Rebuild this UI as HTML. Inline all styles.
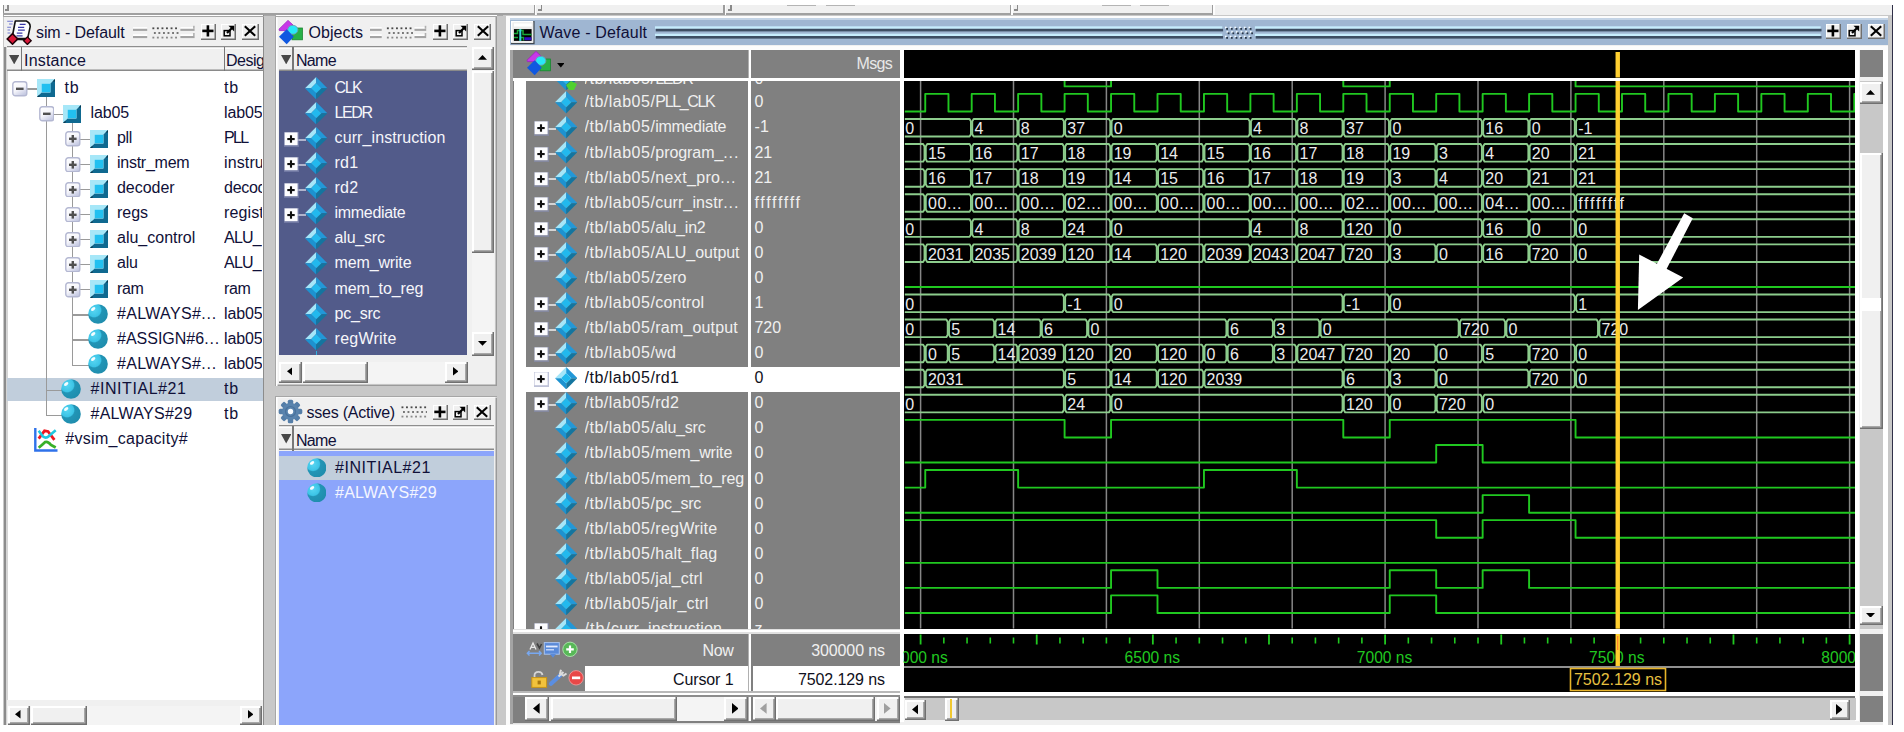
<!DOCTYPE html>
<html><head><meta charset="utf-8"><title>ModelSim Wave</title>
<style>
html,body{margin:0;padding:0;background:#fff;}
body{width:1904px;height:732px;position:relative;overflow:hidden;font-family:"Liberation Sans", sans-serif;font-size:16px;}
body div, body svg{position:absolute;box-sizing:border-box;}
.t{white-space:pre;}
#root{left:0;top:0;width:1904px;height:732px;overflow:hidden;}
</style></head><body>
<div id="root">
<div style="left:3.2px;top:5.0px;width:1888.5px;height:11.0px;background:#f0f0f0;"></div>
<div style="left:3.2px;top:5.0px;width:1.0px;height:9.0px;background:#909090;"></div>
<div style="left:3.2px;top:13.0px;width:531.5px;height:1.7px;background:#a0a0a0;"></div>
<div style="left:533.5px;top:5.0px;width:1.4px;height:9.5px;background:#9c9c9c;"></div>
<div style="left:534.9px;top:5.0px;width:1.6px;height:9.5px;background:#fdfdfd;"></div>
<div style="left:7.4px;top:5.0px;width:1.4px;height:5.5px;background:#8a8a8a;"></div>
<div style="left:4.8px;top:9.2px;width:4.0px;height:1.4px;background:#8a8a8a;"></div>
<div style="left:536.5px;top:13.0px;width:187.9px;height:1.7px;background:#a0a0a0;"></div>
<div style="left:723.2px;top:5.0px;width:1.4px;height:9.5px;background:#9c9c9c;"></div>
<div style="left:724.6px;top:5.0px;width:1.6px;height:9.5px;background:#fdfdfd;"></div>
<div style="left:540.7px;top:5.0px;width:1.4px;height:5.5px;background:#8a8a8a;"></div>
<div style="left:538.1px;top:9.2px;width:4.0px;height:1.4px;background:#8a8a8a;"></div>
<div style="left:726.2px;top:13.0px;width:284.8px;height:1.7px;background:#a0a0a0;"></div>
<div style="left:1009.8px;top:5.0px;width:1.4px;height:9.5px;background:#9c9c9c;"></div>
<div style="left:1011.2px;top:5.0px;width:1.6px;height:9.5px;background:#fdfdfd;"></div>
<div style="left:730.4px;top:5.0px;width:1.4px;height:5.5px;background:#8a8a8a;"></div>
<div style="left:727.8px;top:9.2px;width:4.0px;height:1.4px;background:#8a8a8a;"></div>
<div style="left:1012.8px;top:13.0px;width:200.2px;height:1.7px;background:#a0a0a0;"></div>
<div style="left:1211.8px;top:5.0px;width:1.4px;height:9.5px;background:#9c9c9c;"></div>
<div style="left:1213.2px;top:5.0px;width:1.6px;height:9.5px;background:#fdfdfd;"></div>
<div style="left:1017.0px;top:5.0px;width:1.4px;height:5.5px;background:#8a8a8a;"></div>
<div style="left:1014.4px;top:9.2px;width:4.0px;height:1.4px;background:#8a8a8a;"></div>
<div style="left:786.8px;top:5.0px;width:29.2px;height:1.0px;background:#b4b4b4;"></div>
<div style="left:825.6px;top:5.0px;width:29.4px;height:1.0px;background:#b4b4b4;"></div>
<div style="left:1101.7px;top:5.0px;width:29.3px;height:1.0px;background:#b4b4b4;"></div>
<div style="left:1139.5px;top:5.0px;width:29.5px;height:1.0px;background:#b4b4b4;"></div>
<div style="left:3.2px;top:15.0px;width:1889.0px;height:709.5px;background:#c8c8c8;"></div>
<div style="left:3.2px;top:14.7px;width:500.0px;height:1.3px;background:#a8a8a8;"></div>
<div style="left:3.5px;top:15.0px;width:260.0px;height:709.5px;background:#fff;box-shadow:inset 2px 0 0 #8c8c8c, inset 4px 0 0 #d4d4d4;"></div>
<div style="left:3.5px;top:15.0px;width:260.0px;height:31.5px;background:#f0f0f0;box-shadow:inset 0 1.5px 0 #fff;"></div>
<div style="left:262.5px;top:15.0px;width:1.5px;height:709.5px;background:#8c8c8c;"></div>
<div style="left:3.2px;top:15.6px;width:261.0px;height:1.5px;background:#a6a6a6;"></div>
<svg style="left:6.0px;top:19.0px;" width="27.0" height="26.0" viewBox="0 0 27.0 26.0"><g transform="translate(-6,-19)"><path d="M7.2 21.2 H13 M9 24 H12.5 M7.2 27.2 H11 M7.5 30 H10 M7.5 33 H10.5" stroke="#7078d0" stroke-width="1.1"/><path d="M15.3 21 L26.3 21 Q30.2 22.8 30.2 26.7 L27.6 38.6 L12.4 38.6 L13 33 Z" fill="#fcfeff" stroke="#111" stroke-width="1.6" stroke-linejoin="round"/><path d="M19.7 24.3 H25.6 M18 27.3 H24.2 M18 30.2 H24.8 M16.8 33.2 H22.4 M16.5 35.9 H22.6" stroke="#3838a8" stroke-width="1.3"/><path d="M12.5 39 L27.4 39.6" stroke="#111" stroke-width="2"/><polygon points="12.5,33.6 17.8,38.9 12.5,44.2 7.2,38.9" fill="#d81838" stroke="#200008" stroke-width="1.5"/><polygon points="27.4,36.9 31.2,40.7 27.4,44.5 23.6,40.7" fill="#d81838" stroke="#200008" stroke-width="1.3"/></g></svg>
<div class="t" style="top:23.0px;height:20px;line-height:20px;font-size:16px;color:#101038;left:36.0px;"><span style="letter-spacing:-0.09px">sim - Default</span></div>
<svg style="left:133.1px;top:23.2px;" width="61.7" height="20.0" viewBox="0 0 61.7 20.0"><rect x="0.0" y="4.1" width="14.2" height="1.7" fill="#ffffff"/><rect x="0.0" y="5.8" width="14.2" height="2.1" fill="#a4a4a4"/><rect x="47.4" y="4.1" width="14.2" height="1.7" fill="#ffffff"/><rect x="47.4" y="5.8" width="14.2" height="2.1" fill="#a4a4a4"/><rect x="0.0" y="11.3" width="14.2" height="1.7" fill="#ffffff"/><rect x="0.0" y="13.0" width="14.2" height="2.1" fill="#a4a4a4"/><rect x="47.4" y="11.3" width="14.2" height="1.7" fill="#ffffff"/><rect x="47.4" y="13.0" width="14.2" height="2.1" fill="#a4a4a4"/><rect x="60.1" y="2.8" width="1.6" height="3" fill="#b0b0b0"/><rect x="60.1" y="10.0" width="1.6" height="3" fill="#b0b0b0"/><rect x="19.4" y="4.4" width="1.9" height="1.8" fill="#4a4a4a"/><rect x="23.9" y="4.4" width="1.9" height="1.8" fill="#4a4a4a"/><rect x="28.5" y="4.4" width="1.9" height="1.8" fill="#4a4a4a"/><rect x="33.0" y="4.4" width="1.9" height="1.8" fill="#4a4a4a"/><rect x="37.6" y="4.4" width="1.9" height="1.8" fill="#4a4a4a"/><rect x="42.1" y="4.4" width="1.9" height="1.8" fill="#4a4a4a"/><rect x="20.9" y="9.1" width="1.9" height="1.8" fill="#6a6a6a"/><rect x="25.4" y="9.1" width="1.9" height="1.8" fill="#6a6a6a"/><rect x="30.0" y="9.1" width="1.9" height="1.8" fill="#6a6a6a"/><rect x="34.5" y="9.1" width="1.9" height="1.8" fill="#6a6a6a"/><rect x="39.1" y="9.1" width="1.9" height="1.8" fill="#6a6a6a"/><rect x="43.6" y="9.1" width="1.9" height="1.8" fill="#6a6a6a"/><rect x="19.4" y="13.7" width="1.9" height="1.8" fill="#8a8a8a"/><rect x="23.9" y="13.7" width="1.9" height="1.8" fill="#8a8a8a"/><rect x="28.5" y="13.7" width="1.9" height="1.8" fill="#8a8a8a"/><rect x="33.0" y="13.7" width="1.9" height="1.8" fill="#8a8a8a"/><rect x="37.6" y="13.7" width="1.9" height="1.8" fill="#8a8a8a"/><rect x="42.1" y="13.7" width="1.9" height="1.8" fill="#8a8a8a"/></svg>
<div style="left:200.7px;top:23.8px;width:15.0px;height:15.8px;background:#f0f0f0;box-shadow:inset -1.5px -1.5px 0 #707070, inset 1px 1px 0 #fff;"></div>
<svg style="left:202.0px;top:25.2px;" width="12.0" height="12.0" viewBox="0 0 12.0 12.0"><rect x="0.3" y="4.6" width="11.2" height="2.6" fill="#000"/><rect x="4.6" y="0.3" width="2.6" height="11.2" fill="#000"/></svg>
<div style="left:221.4px;top:23.8px;width:15.0px;height:15.8px;background:#f0f0f0;box-shadow:inset -1.5px -1.5px 0 #707070, inset 1px 1px 0 #fff;"></div>
<svg style="left:222.7px;top:25.2px;" width="12.0" height="12.0" viewBox="0 0 12.0 12.0"><rect x="1.2" y="5.6" width="5.8" height="5.2" fill="none" stroke="#000" stroke-width="1.5"/><path d="M4 8 L10 2" stroke="#000" stroke-width="2.2" fill="none"/><polygon points="5.5,0.8 11.2,0.8 11.2,6.5" fill="#000"/></svg>
<div style="left:242.0px;top:23.8px;width:17.2px;height:15.8px;background:#f0f0f0;box-shadow:inset -1.5px -1.5px 0 #707070, inset 1px 1px 0 #fff;"></div>
<svg style="left:244.2px;top:25.4px;" width="12.0" height="12.0" viewBox="0 0 12.0 12.0"><path d="M0.8 1.2 L11.2 10.8 M11.2 1.2 L0.8 10.8" stroke="#000" stroke-width="2.1" fill="none"/></svg>
<div style="left:7.0px;top:45.7px;width:255.5px;height:25.3px;background:#f0f0f0;box-shadow:inset 0 -1.6px 0 #8a8a8a, inset 0 1.3px 0 #8e8e8e, inset 0 2.8px 0 #fff;"></div>
<svg style="left:9.1px;top:54.9px;" width="10.4" height="9.4" viewBox="0 0 10.4 9.4"><polygon points="0,0 10.4,0 5.2,9.4" fill="#484848"/></svg>
<div style="left:20.5px;top:46.5px;width:1.7px;height:24.5px;background:#787878;"></div>
<div class="t" style="top:51.0px;height:20px;line-height:20px;font-size:16px;color:#101038;left:24.0px;"><span style="letter-spacing:0.19px">Instance</span></div>
<div style="left:223.5px;top:46.5px;width:1.7px;height:24.5px;background:#787878;"></div>
<div class="t" style="top:51.0px;height:20px;line-height:20px;font-size:16px;color:#101038;left:226.0px;width:36.5px;overflow:hidden;"><span style="letter-spacing:-0.50px">Desig</span></div>
<div style="left:7.0px;top:378.3px;width:255.5px;height:22.6px;background:#c1cedc;"></div>
<div style="left:46.0px;top:97.4px;width:1.3px;height:317.3px;background:#9a9a9a;"></div>
<div style="left:27.0px;top:88.4px;width:11.0px;height:1.3px;background:#9a9a9a;"></div>
<div style="left:71.5px;top:122.5px;width:1.3px;height:242.0px;background:#9a9a9a;"></div>
<div style="left:46.0px;top:113.5px;width:7.0px;height:1.3px;background:#9a9a9a;"></div>
<div style="left:52.0px;top:113.5px;width:11.0px;height:1.3px;background:#9a9a9a;"></div>
<div style="left:71.5px;top:138.6px;width:18.0px;height:1.3px;background:#9a9a9a;"></div>
<div style="left:71.5px;top:163.7px;width:18.0px;height:1.3px;background:#9a9a9a;"></div>
<div style="left:71.5px;top:188.8px;width:18.0px;height:1.3px;background:#9a9a9a;"></div>
<div style="left:71.5px;top:213.9px;width:18.0px;height:1.3px;background:#9a9a9a;"></div>
<div style="left:71.5px;top:239.0px;width:18.0px;height:1.3px;background:#9a9a9a;"></div>
<div style="left:71.5px;top:264.1px;width:18.0px;height:1.3px;background:#9a9a9a;"></div>
<div style="left:71.5px;top:289.2px;width:18.0px;height:1.3px;background:#9a9a9a;"></div>
<div style="left:71.5px;top:314.3px;width:17.0px;height:1.3px;background:#9a9a9a;"></div>
<div style="left:71.5px;top:339.4px;width:17.0px;height:1.3px;background:#9a9a9a;"></div>
<div style="left:71.5px;top:364.5px;width:17.0px;height:1.3px;background:#9a9a9a;"></div>
<div style="left:46.0px;top:389.6px;width:16.0px;height:1.3px;background:#9a9a9a;"></div>
<div style="left:46.0px;top:414.7px;width:16.0px;height:1.3px;background:#9a9a9a;"></div>
<svg style="left:12.2px;top:81.2px;" width="15.6" height="15.6" viewBox="0 0 15.6 15.6"><defs><linearGradient id="eg1" x1="0" y1="0" x2="0.6" y2="1"><stop offset="0" stop-color="#ffffff"/><stop offset="0.55" stop-color="#f6f6fb"/><stop offset="1" stop-color="#c8cce4"/></linearGradient></defs><rect x="0.8" y="0.8" width="14.0" height="14.0" rx="2.6" fill="url(#eg1)" stroke="#b4b8d2" stroke-width="1.4"/><rect x="4.0" y="6.6" width="7.6" height="2.4" fill="#505050"/></svg>
<svg style="left:36.8px;top:79.4px;" width="18.0" height="18.0" viewBox="0 0 18.0 18.0"><polygon points="0,0 18.0,0 13.4,4.6 4.6,4.6 4.6,13.4 0,18.0" fill="#a6e7f8"/><polygon points="18.0,0 18.0,18.0 0,18.0 4.6,13.4 13.4,13.4 13.4,4.6" fill="#0f6990"/><rect x="4.6" y="4.6" width="8.8" height="8.8" fill="#22c0f0"/><polygon points="18.0,0 18.0,2.5 15.5,2.5" fill="#083850"/><polygon points="0,18.0 2.5,18.0 2.5,15.5" fill="#083850"/></svg>
<div class="t" style="top:78.0px;height:20px;line-height:20px;font-size:16px;color:#101038;left:64.6px;"><span style="letter-spacing:0.71px">tb</span></div>
<div class="t" style="top:78.0px;height:20px;line-height:20px;font-size:16px;color:#101038;left:224.0px;width:38.0px;overflow:hidden;"><span style="letter-spacing:0.71px">tb</span></div>
<svg style="left:38.9px;top:106.3px;" width="15.6" height="15.6" viewBox="0 0 15.6 15.6"><defs><linearGradient id="eg2" x1="0" y1="0" x2="0.6" y2="1"><stop offset="0" stop-color="#ffffff"/><stop offset="0.55" stop-color="#f6f6fb"/><stop offset="1" stop-color="#c8cce4"/></linearGradient></defs><rect x="0.8" y="0.8" width="14.0" height="14.0" rx="2.6" fill="url(#eg2)" stroke="#b4b8d2" stroke-width="1.4"/><rect x="4.0" y="6.6" width="7.6" height="2.4" fill="#505050"/></svg>
<svg style="left:63.4px;top:104.5px;" width="18.0" height="18.0" viewBox="0 0 18.0 18.0"><polygon points="0,0 18.0,0 13.4,4.6 4.6,4.6 4.6,13.4 0,18.0" fill="#a6e7f8"/><polygon points="18.0,0 18.0,18.0 0,18.0 4.6,13.4 13.4,13.4 13.4,4.6" fill="#0f6990"/><rect x="4.6" y="4.6" width="8.8" height="8.8" fill="#22c0f0"/><polygon points="18.0,0 18.0,2.5 15.5,2.5" fill="#083850"/><polygon points="0,18.0 2.5,18.0 2.5,15.5" fill="#083850"/></svg>
<div class="t" style="top:103.0px;height:20px;line-height:20px;font-size:16px;color:#101038;left:90.5px;"><span style="letter-spacing:-0.15px">lab05</span></div>
<div class="t" style="top:103.0px;height:20px;line-height:20px;font-size:16px;color:#101038;left:224.0px;width:38.0px;overflow:hidden;"><span style="letter-spacing:-0.15px">lab05</span></div>
<svg style="left:65.2px;top:131.4px;" width="15.6" height="15.6" viewBox="0 0 15.6 15.6"><defs><linearGradient id="eg3" x1="0" y1="0" x2="0.6" y2="1"><stop offset="0" stop-color="#ffffff"/><stop offset="0.55" stop-color="#f6f6fb"/><stop offset="1" stop-color="#c8cce4"/></linearGradient></defs><rect x="0.8" y="0.8" width="14.0" height="14.0" rx="2.6" fill="url(#eg3)" stroke="#b4b8d2" stroke-width="1.4"/><rect x="4.0" y="6.6" width="7.6" height="2.4" fill="#505050"/><rect x="6.6" y="4.0" width="2.4" height="7.6" fill="#505050"/></svg>
<svg style="left:89.8px;top:129.6px;" width="18.0" height="18.0" viewBox="0 0 18.0 18.0"><polygon points="0,0 18.0,0 13.4,4.6 4.6,4.6 4.6,13.4 0,18.0" fill="#a6e7f8"/><polygon points="18.0,0 18.0,18.0 0,18.0 4.6,13.4 13.4,13.4 13.4,4.6" fill="#0f6990"/><rect x="4.6" y="4.6" width="8.8" height="8.8" fill="#22c0f0"/><polygon points="18.0,0 18.0,2.5 15.5,2.5" fill="#083850"/><polygon points="0,18.0 2.5,18.0 2.5,15.5" fill="#083850"/></svg>
<div class="t" style="top:128.0px;height:20px;line-height:20px;font-size:16px;color:#101038;left:117.0px;"><span style="letter-spacing:-0.41px">pll</span></div>
<div class="t" style="top:128.0px;height:20px;line-height:20px;font-size:16px;color:#101038;left:224.0px;width:38.0px;overflow:hidden;"><span style="letter-spacing:-1.61px">PLL</span></div>
<svg style="left:65.2px;top:156.5px;" width="15.6" height="15.6" viewBox="0 0 15.6 15.6"><defs><linearGradient id="eg4" x1="0" y1="0" x2="0.6" y2="1"><stop offset="0" stop-color="#ffffff"/><stop offset="0.55" stop-color="#f6f6fb"/><stop offset="1" stop-color="#c8cce4"/></linearGradient></defs><rect x="0.8" y="0.8" width="14.0" height="14.0" rx="2.6" fill="url(#eg4)" stroke="#b4b8d2" stroke-width="1.4"/><rect x="4.0" y="6.6" width="7.6" height="2.4" fill="#505050"/><rect x="6.6" y="4.0" width="2.4" height="7.6" fill="#505050"/></svg>
<svg style="left:89.8px;top:154.7px;" width="18.0" height="18.0" viewBox="0 0 18.0 18.0"><polygon points="0,0 18.0,0 13.4,4.6 4.6,4.6 4.6,13.4 0,18.0" fill="#a6e7f8"/><polygon points="18.0,0 18.0,18.0 0,18.0 4.6,13.4 13.4,13.4 13.4,4.6" fill="#0f6990"/><rect x="4.6" y="4.6" width="8.8" height="8.8" fill="#22c0f0"/><polygon points="18.0,0 18.0,2.5 15.5,2.5" fill="#083850"/><polygon points="0,18.0 2.5,18.0 2.5,15.5" fill="#083850"/></svg>
<div class="t" style="top:153.0px;height:20px;line-height:20px;font-size:16px;color:#101038;left:117.0px;"><span style="letter-spacing:-0.26px">instr_mem</span></div>
<div class="t" style="top:153.0px;height:20px;line-height:20px;font-size:16px;color:#101038;left:224.0px;width:38.0px;overflow:hidden;"><span style="letter-spacing:0.12px">instru</span></div>
<svg style="left:65.2px;top:181.6px;" width="15.6" height="15.6" viewBox="0 0 15.6 15.6"><defs><linearGradient id="eg5" x1="0" y1="0" x2="0.6" y2="1"><stop offset="0" stop-color="#ffffff"/><stop offset="0.55" stop-color="#f6f6fb"/><stop offset="1" stop-color="#c8cce4"/></linearGradient></defs><rect x="0.8" y="0.8" width="14.0" height="14.0" rx="2.6" fill="url(#eg5)" stroke="#b4b8d2" stroke-width="1.4"/><rect x="4.0" y="6.6" width="7.6" height="2.4" fill="#505050"/><rect x="6.6" y="4.0" width="2.4" height="7.6" fill="#505050"/></svg>
<svg style="left:89.8px;top:179.8px;" width="18.0" height="18.0" viewBox="0 0 18.0 18.0"><polygon points="0,0 18.0,0 13.4,4.6 4.6,4.6 4.6,13.4 0,18.0" fill="#a6e7f8"/><polygon points="18.0,0 18.0,18.0 0,18.0 4.6,13.4 13.4,13.4 13.4,4.6" fill="#0f6990"/><rect x="4.6" y="4.6" width="8.8" height="8.8" fill="#22c0f0"/><polygon points="18.0,0 18.0,2.5 15.5,2.5" fill="#083850"/><polygon points="0,18.0 2.5,18.0 2.5,15.5" fill="#083850"/></svg>
<div class="t" style="top:178.0px;height:20px;line-height:20px;font-size:16px;color:#101038;left:117.0px;"><span style="letter-spacing:-0.03px">decoder</span></div>
<div class="t" style="top:178.0px;height:20px;line-height:20px;font-size:16px;color:#101038;left:224.0px;width:38.0px;overflow:hidden;"><span style="letter-spacing:-0.27px">decoc</span></div>
<svg style="left:65.2px;top:206.7px;" width="15.6" height="15.6" viewBox="0 0 15.6 15.6"><defs><linearGradient id="eg6" x1="0" y1="0" x2="0.6" y2="1"><stop offset="0" stop-color="#ffffff"/><stop offset="0.55" stop-color="#f6f6fb"/><stop offset="1" stop-color="#c8cce4"/></linearGradient></defs><rect x="0.8" y="0.8" width="14.0" height="14.0" rx="2.6" fill="url(#eg6)" stroke="#b4b8d2" stroke-width="1.4"/><rect x="4.0" y="6.6" width="7.6" height="2.4" fill="#505050"/><rect x="6.6" y="4.0" width="2.4" height="7.6" fill="#505050"/></svg>
<svg style="left:89.8px;top:204.9px;" width="18.0" height="18.0" viewBox="0 0 18.0 18.0"><polygon points="0,0 18.0,0 13.4,4.6 4.6,4.6 4.6,13.4 0,18.0" fill="#a6e7f8"/><polygon points="18.0,0 18.0,18.0 0,18.0 4.6,13.4 13.4,13.4 13.4,4.6" fill="#0f6990"/><rect x="4.6" y="4.6" width="8.8" height="8.8" fill="#22c0f0"/><polygon points="18.0,0 18.0,2.5 15.5,2.5" fill="#083850"/><polygon points="0,18.0 2.5,18.0 2.5,15.5" fill="#083850"/></svg>
<div class="t" style="top:203.0px;height:20px;line-height:20px;font-size:16px;color:#101038;left:117.0px;"><span style="letter-spacing:-0.03px">regs</span></div>
<div class="t" style="top:203.0px;height:20px;line-height:20px;font-size:16px;color:#101038;left:224.0px;width:38.0px;overflow:hidden;"><span style="letter-spacing:0.12px">regist</span></div>
<svg style="left:65.2px;top:231.8px;" width="15.6" height="15.6" viewBox="0 0 15.6 15.6"><defs><linearGradient id="eg7" x1="0" y1="0" x2="0.6" y2="1"><stop offset="0" stop-color="#ffffff"/><stop offset="0.55" stop-color="#f6f6fb"/><stop offset="1" stop-color="#c8cce4"/></linearGradient></defs><rect x="0.8" y="0.8" width="14.0" height="14.0" rx="2.6" fill="url(#eg7)" stroke="#b4b8d2" stroke-width="1.4"/><rect x="4.0" y="6.6" width="7.6" height="2.4" fill="#505050"/><rect x="6.6" y="4.0" width="2.4" height="7.6" fill="#505050"/></svg>
<svg style="left:89.8px;top:230.0px;" width="18.0" height="18.0" viewBox="0 0 18.0 18.0"><polygon points="0,0 18.0,0 13.4,4.6 4.6,4.6 4.6,13.4 0,18.0" fill="#a6e7f8"/><polygon points="18.0,0 18.0,18.0 0,18.0 4.6,13.4 13.4,13.4 13.4,4.6" fill="#0f6990"/><rect x="4.6" y="4.6" width="8.8" height="8.8" fill="#22c0f0"/><polygon points="18.0,0 18.0,2.5 15.5,2.5" fill="#083850"/><polygon points="0,18.0 2.5,18.0 2.5,15.5" fill="#083850"/></svg>
<div class="t" style="top:228.0px;height:20px;line-height:20px;font-size:16px;color:#101038;left:117.0px;"><span style="letter-spacing:-0.00px">alu_control</span></div>
<div class="t" style="top:228.0px;height:20px;line-height:20px;font-size:16px;color:#101038;left:224.0px;width:38.0px;overflow:hidden;"><span style="letter-spacing:-0.78px">ALU_</span></div>
<svg style="left:65.2px;top:256.9px;" width="15.6" height="15.6" viewBox="0 0 15.6 15.6"><defs><linearGradient id="eg8" x1="0" y1="0" x2="0.6" y2="1"><stop offset="0" stop-color="#ffffff"/><stop offset="0.55" stop-color="#f6f6fb"/><stop offset="1" stop-color="#c8cce4"/></linearGradient></defs><rect x="0.8" y="0.8" width="14.0" height="14.0" rx="2.6" fill="url(#eg8)" stroke="#b4b8d2" stroke-width="1.4"/><rect x="4.0" y="6.6" width="7.6" height="2.4" fill="#505050"/><rect x="6.6" y="4.0" width="2.4" height="7.6" fill="#505050"/></svg>
<svg style="left:89.8px;top:255.1px;" width="18.0" height="18.0" viewBox="0 0 18.0 18.0"><polygon points="0,0 18.0,0 13.4,4.6 4.6,4.6 4.6,13.4 0,18.0" fill="#a6e7f8"/><polygon points="18.0,0 18.0,18.0 0,18.0 4.6,13.4 13.4,13.4 13.4,4.6" fill="#0f6990"/><rect x="4.6" y="4.6" width="8.8" height="8.8" fill="#22c0f0"/><polygon points="18.0,0 18.0,2.5 15.5,2.5" fill="#083850"/><polygon points="0,18.0 2.5,18.0 2.5,15.5" fill="#083850"/></svg>
<div class="t" style="top:253.0px;height:20px;line-height:20px;font-size:16px;color:#101038;left:117.0px;"><span style="letter-spacing:-0.23px">alu</span></div>
<div class="t" style="top:253.0px;height:20px;line-height:20px;font-size:16px;color:#101038;left:224.0px;width:38.0px;overflow:hidden;"><span style="letter-spacing:-0.78px">ALU_</span></div>
<svg style="left:65.2px;top:282.0px;" width="15.6" height="15.6" viewBox="0 0 15.6 15.6"><defs><linearGradient id="eg9" x1="0" y1="0" x2="0.6" y2="1"><stop offset="0" stop-color="#ffffff"/><stop offset="0.55" stop-color="#f6f6fb"/><stop offset="1" stop-color="#c8cce4"/></linearGradient></defs><rect x="0.8" y="0.8" width="14.0" height="14.0" rx="2.6" fill="url(#eg9)" stroke="#b4b8d2" stroke-width="1.4"/><rect x="4.0" y="6.6" width="7.6" height="2.4" fill="#505050"/><rect x="6.6" y="4.0" width="2.4" height="7.6" fill="#505050"/></svg>
<svg style="left:89.8px;top:280.2px;" width="18.0" height="18.0" viewBox="0 0 18.0 18.0"><polygon points="0,0 18.0,0 13.4,4.6 4.6,4.6 4.6,13.4 0,18.0" fill="#a6e7f8"/><polygon points="18.0,0 18.0,18.0 0,18.0 4.6,13.4 13.4,13.4 13.4,4.6" fill="#0f6990"/><rect x="4.6" y="4.6" width="8.8" height="8.8" fill="#22c0f0"/><polygon points="18.0,0 18.0,2.5 15.5,2.5" fill="#083850"/><polygon points="0,18.0 2.5,18.0 2.5,15.5" fill="#083850"/></svg>
<div class="t" style="top:279.0px;height:20px;line-height:20px;font-size:16px;color:#101038;left:117.0px;"><span style="letter-spacing:-0.33px">ram</span></div>
<div class="t" style="top:279.0px;height:20px;line-height:20px;font-size:16px;color:#101038;left:224.0px;width:38.0px;overflow:hidden;"><span style="letter-spacing:-0.33px">ram</span></div>
<svg style="left:87.5px;top:303.7px;" width="20.0" height="20.0" viewBox="0 0 20.0 20.0"><defs><radialGradient id="sg1" cx="0.3" cy="0.3" r="0.8"><stop offset="0" stop-color="#58d6f2"/><stop offset="0.42" stop-color="#3cc4e6"/><stop offset="0.5" stop-color="#2295b6"/><stop offset="1" stop-color="#1f8cac"/></radialGradient></defs><circle cx="10" cy="10" r="9.8" fill="url(#sg1)"/><ellipse cx="5.2" cy="5.0" rx="2.4" ry="1.5" transform="rotate(-35 5.2 5.0)" fill="#f4fdff"/></svg>
<div class="t" style="top:304.0px;height:20px;line-height:20px;font-size:16px;color:#101038;left:117.0px;"><span style="letter-spacing:0.33px">#ALWAYS#</span><span style="letter-spacing:0.90px">...</span></div>
<div class="t" style="top:304.0px;height:20px;line-height:20px;font-size:16px;color:#101038;left:224.0px;width:38.0px;overflow:hidden;"><span style="letter-spacing:-0.15px">lab05</span></div>
<svg style="left:87.5px;top:328.8px;" width="20.0" height="20.0" viewBox="0 0 20.0 20.0"><defs><radialGradient id="sg2" cx="0.3" cy="0.3" r="0.8"><stop offset="0" stop-color="#58d6f2"/><stop offset="0.42" stop-color="#3cc4e6"/><stop offset="0.5" stop-color="#2295b6"/><stop offset="1" stop-color="#1f8cac"/></radialGradient></defs><circle cx="10" cy="10" r="9.8" fill="url(#sg2)"/><ellipse cx="5.2" cy="5.0" rx="2.4" ry="1.5" transform="rotate(-35 5.2 5.0)" fill="#f4fdff"/></svg>
<div class="t" style="top:329.0px;height:20px;line-height:20px;font-size:16px;color:#101038;left:117.0px;"><span style="letter-spacing:-0.00px">#ASSIGN#6</span><span style="letter-spacing:0.90px">...</span></div>
<div class="t" style="top:329.0px;height:20px;line-height:20px;font-size:16px;color:#101038;left:224.0px;width:38.0px;overflow:hidden;"><span style="letter-spacing:-0.15px">lab05</span></div>
<svg style="left:87.5px;top:353.9px;" width="20.0" height="20.0" viewBox="0 0 20.0 20.0"><defs><radialGradient id="sg3" cx="0.3" cy="0.3" r="0.8"><stop offset="0" stop-color="#58d6f2"/><stop offset="0.42" stop-color="#3cc4e6"/><stop offset="0.5" stop-color="#2295b6"/><stop offset="1" stop-color="#1f8cac"/></radialGradient></defs><circle cx="10" cy="10" r="9.8" fill="url(#sg3)"/><ellipse cx="5.2" cy="5.0" rx="2.4" ry="1.5" transform="rotate(-35 5.2 5.0)" fill="#f4fdff"/></svg>
<div class="t" style="top:354.0px;height:20px;line-height:20px;font-size:16px;color:#101038;left:117.0px;"><span style="letter-spacing:0.33px">#ALWAYS#</span><span style="letter-spacing:0.90px">...</span></div>
<div class="t" style="top:354.0px;height:20px;line-height:20px;font-size:16px;color:#101038;left:224.0px;width:38.0px;overflow:hidden;"><span style="letter-spacing:-0.15px">lab05</span></div>
<svg style="left:61.1px;top:379.0px;" width="20.0" height="20.0" viewBox="0 0 20.0 20.0"><defs><radialGradient id="sg4" cx="0.3" cy="0.3" r="0.8"><stop offset="0" stop-color="#58d6f2"/><stop offset="0.42" stop-color="#3cc4e6"/><stop offset="0.5" stop-color="#2295b6"/><stop offset="1" stop-color="#1f8cac"/></radialGradient></defs><circle cx="10" cy="10" r="9.8" fill="url(#sg4)"/><ellipse cx="5.2" cy="5.0" rx="2.4" ry="1.5" transform="rotate(-35 5.2 5.0)" fill="#f4fdff"/></svg>
<div class="t" style="top:379.0px;height:20px;line-height:20px;font-size:16px;color:#101038;left:90.5px;"><span style="letter-spacing:0.56px">#INITIAL#21</span></div>
<div class="t" style="top:379.0px;height:20px;line-height:20px;font-size:16px;color:#101038;left:224.0px;width:38.0px;overflow:hidden;"><span style="letter-spacing:0.71px">tb</span></div>
<svg style="left:61.1px;top:404.1px;" width="20.0" height="20.0" viewBox="0 0 20.0 20.0"><defs><radialGradient id="sg5" cx="0.3" cy="0.3" r="0.8"><stop offset="0" stop-color="#58d6f2"/><stop offset="0.42" stop-color="#3cc4e6"/><stop offset="0.5" stop-color="#2295b6"/><stop offset="1" stop-color="#1f8cac"/></radialGradient></defs><circle cx="10" cy="10" r="9.8" fill="url(#sg5)"/><ellipse cx="5.2" cy="5.0" rx="2.4" ry="1.5" transform="rotate(-35 5.2 5.0)" fill="#f4fdff"/></svg>
<div class="t" style="top:404.0px;height:20px;line-height:20px;font-size:16px;color:#101038;left:90.5px;"><span style="letter-spacing:0.26px">#ALWAYS#29</span></div>
<div class="t" style="top:404.0px;height:20px;line-height:20px;font-size:16px;color:#101038;left:224.0px;width:38.0px;overflow:hidden;"><span style="letter-spacing:0.71px">tb</span></div>
<svg style="left:33.0px;top:426.0px;" width="26.0" height="27.0" viewBox="0 0 26.0 27.0"><g transform="translate(-33,-426)"><path d="M35.3 428 V450.5 H57.5" stroke="#2f72ea" stroke-width="2.4" fill="none"/><path d="M38.7 447.8 Q42 445 45.2 442 Q48 441 51 445 L55.7 447.6" stroke="#38b028" stroke-width="2.8" fill="none"/><path d="M38.7 438.6 L44.5 430.8 L48 431.5 L54.4 439.9" stroke="#f01820" stroke-width="2.8" fill="none"/><path d="M38.7 430.7 L43 436.5 Q46 439 49 436 L55.7 430.3" stroke="#20c8e0" stroke-width="2.6" fill="none"/></g></svg>
<div class="t" style="top:429.0px;height:20px;line-height:20px;font-size:16px;color:#101038;left:65.3px;"><span style="letter-spacing:0.29px">#vsim_capacity#</span></div>
<div style="left:7.0px;top:700.0px;width:255.5px;height:24.5px;background:#f0f0f0;"></div>
<div style="left:7.5px;top:705.5px;width:254.5px;height:19.0px;background:#f4f4f4;"></div>
<div style="left:7.5px;top:705.5px;width:22.0px;height:19.0px;background:#f0f0f0;box-shadow:inset -1.5px -1.5px 0 #707070, inset 2px 2px 0 #fff, inset -3px -3px 0 #a8a8a8;"></div>
<svg style="left:15.1px;top:710.4px;" width="5.5" height="8.6" viewBox="0 0 5.5 8.6"><polygon points="5.5,0 5.5,8.6 0,4.3" fill="#000"/></svg>
<div style="left:240.0px;top:705.5px;width:22.0px;height:19.0px;background:#f0f0f0;box-shadow:inset -1.5px -1.5px 0 #707070, inset 2px 2px 0 #fff, inset -3px -3px 0 #a8a8a8;"></div>
<svg style="left:247.7px;top:710.4px;" width="5.5" height="8.6" viewBox="0 0 5.5 8.6"><polygon points="0,0 0,8.6 5.5,4.3" fill="#000"/></svg>
<div style="left:30.5px;top:705.5px;width:56.0px;height:19.0px;background:#f0f0f0;box-shadow:inset -1.5px -1.5px 0 #707070, inset 2px 2px 0 #fff, inset -3px -3px 0 #a8a8a8;"></div>
<div style="left:275.5px;top:15.0px;width:221.5px;height:371.0px;background:#f0f0f0;box-shadow:inset 1.5px 1.5px 0 #fff, inset -1.5px -1.5px 0 #9a9a9a;"></div>
<div style="left:275.0px;top:15.6px;width:222.0px;height:1.5px;background:#a6a6a6;"></div>
<div style="left:275.0px;top:15.6px;width:1.4px;height:370.0px;background:#a6a6a6;"></div>
<svg style="left:278.0px;top:19.0px;" width="26.0" height="27.0" viewBox="0 0 26.0 27.0"><g transform="translate(-278,-19)"><polygon points="279,29.2 288,20.4 293,25 287,30.6 279.4,30.6" fill="#c838e8" stroke="#a020c0" stroke-width="0.8"/><rect x="292" y="28" width="10.4" height="11.8" fill="#28b048" stroke="#188830" stroke-width="0.8"/><ellipse cx="292.8" cy="29.8" rx="5.1" ry="4.5" fill="#28e8f8" stroke="#7098b0" stroke-width="0.9"/><polygon points="279,36.7 286.7,29.2 293.8,36.7 286.7,44.3" fill="#1058e0"/></g></svg>
<div class="t" style="top:23.0px;height:20px;line-height:20px;font-size:16px;color:#101038;left:308.5px;"><span style="letter-spacing:0.06px">Objects</span></div>
<svg style="left:370.4px;top:23.2px;" width="56.3" height="20.0" viewBox="0 0 56.3 20.0"><rect x="0.0" y="4.1" width="11.7" height="1.7" fill="#ffffff"/><rect x="0.0" y="5.8" width="11.7" height="2.1" fill="#a4a4a4"/><rect x="44.5" y="4.1" width="11.7" height="1.7" fill="#ffffff"/><rect x="44.5" y="5.8" width="11.7" height="2.1" fill="#a4a4a4"/><rect x="0.0" y="11.3" width="11.7" height="1.7" fill="#ffffff"/><rect x="0.0" y="13.0" width="11.7" height="2.1" fill="#a4a4a4"/><rect x="44.5" y="11.3" width="11.7" height="1.7" fill="#ffffff"/><rect x="44.5" y="13.0" width="11.7" height="2.1" fill="#a4a4a4"/><rect x="54.7" y="2.8" width="1.6" height="3" fill="#b0b0b0"/><rect x="54.7" y="10.0" width="1.6" height="3" fill="#b0b0b0"/><rect x="16.9" y="4.4" width="1.9" height="1.8" fill="#4a4a4a"/><rect x="21.4" y="4.4" width="1.9" height="1.8" fill="#4a4a4a"/><rect x="26.0" y="4.4" width="1.9" height="1.8" fill="#4a4a4a"/><rect x="30.5" y="4.4" width="1.9" height="1.8" fill="#4a4a4a"/><rect x="35.1" y="4.4" width="1.9" height="1.8" fill="#4a4a4a"/><rect x="39.6" y="4.4" width="1.9" height="1.8" fill="#4a4a4a"/><rect x="18.4" y="9.1" width="1.9" height="1.8" fill="#6a6a6a"/><rect x="22.9" y="9.1" width="1.9" height="1.8" fill="#6a6a6a"/><rect x="27.5" y="9.1" width="1.9" height="1.8" fill="#6a6a6a"/><rect x="32.0" y="9.1" width="1.9" height="1.8" fill="#6a6a6a"/><rect x="36.6" y="9.1" width="1.9" height="1.8" fill="#6a6a6a"/><rect x="41.1" y="9.1" width="1.9" height="1.8" fill="#6a6a6a"/><rect x="16.9" y="13.7" width="1.9" height="1.8" fill="#8a8a8a"/><rect x="21.4" y="13.7" width="1.9" height="1.8" fill="#8a8a8a"/><rect x="26.0" y="13.7" width="1.9" height="1.8" fill="#8a8a8a"/><rect x="30.5" y="13.7" width="1.9" height="1.8" fill="#8a8a8a"/><rect x="35.1" y="13.7" width="1.9" height="1.8" fill="#8a8a8a"/><rect x="39.6" y="13.7" width="1.9" height="1.8" fill="#8a8a8a"/></svg>
<div style="left:432.7px;top:23.8px;width:15.0px;height:15.8px;background:#f0f0f0;box-shadow:inset -1.5px -1.5px 0 #707070, inset 1px 1px 0 #fff;"></div>
<svg style="left:434.0px;top:25.2px;" width="12.0" height="12.0" viewBox="0 0 12.0 12.0"><rect x="0.3" y="4.6" width="11.2" height="2.6" fill="#000"/><rect x="4.6" y="0.3" width="2.6" height="11.2" fill="#000"/></svg>
<div style="left:453.3px;top:23.8px;width:15.0px;height:15.8px;background:#f0f0f0;box-shadow:inset -1.5px -1.5px 0 #707070, inset 1px 1px 0 #fff;"></div>
<svg style="left:454.6px;top:25.2px;" width="12.0" height="12.0" viewBox="0 0 12.0 12.0"><rect x="1.2" y="5.6" width="5.8" height="5.2" fill="none" stroke="#000" stroke-width="1.5"/><path d="M4 8 L10 2" stroke="#000" stroke-width="2.2" fill="none"/><polygon points="5.5,0.8 11.2,0.8 11.2,6.5" fill="#000"/></svg>
<div style="left:474.3px;top:23.8px;width:17.2px;height:15.8px;background:#f0f0f0;box-shadow:inset -1.5px -1.5px 0 #707070, inset 1px 1px 0 #fff;"></div>
<svg style="left:476.5px;top:25.4px;" width="12.0" height="12.0" viewBox="0 0 12.0 12.0"><path d="M0.8 1.2 L11.2 10.8 M11.2 1.2 L0.8 10.8" stroke="#000" stroke-width="2.1" fill="none"/></svg>
<div style="left:278.5px;top:45.7px;width:188.0px;height:25.3px;background:#f0f0f0;box-shadow:inset 0 -1.6px 0 #8a8a8a, inset 0 1.3px 0 #8e8e8e, inset 0 2.8px 0 #fff;"></div>
<svg style="left:280.6px;top:54.9px;" width="10.4" height="9.4" viewBox="0 0 10.4 9.4"><polygon points="0,0 10.4,0 5.2,9.4" fill="#484848"/></svg>
<div style="left:292.0px;top:46.5px;width:1.7px;height:24.5px;background:#787878;"></div>
<div class="t" style="top:51.0px;height:20px;line-height:20px;font-size:16px;color:#101038;left:296.0px;"><span style="letter-spacing:-0.70px">Name</span></div>
<div style="left:278.5px;top:71.0px;width:188.0px;height:284.0px;background:#525b8a;"></div>
<div style="left:278.5px;top:355.0px;width:188.0px;height:6.5px;background:#f0f0f0;"></div>
<div style="left:472.0px;top:46.5px;width:22.0px;height:309.5px;background:#f4f4f4;"></div>
<div style="left:472.0px;top:46.5px;width:22.0px;height:23.0px;background:#f0f0f0;box-shadow:inset -1.5px -1.5px 0 #707070, inset 2px 2px 0 #fff, inset -3px -3px 0 #a8a8a8;"></div>
<svg style="left:477.9px;top:55.3px;" width="9.0" height="4.8" viewBox="0 0 9.0 4.8"><polygon points="0,4.8 9.0,4.8 4.5,0" fill="#000"/></svg>
<div style="left:472.0px;top:70.7px;width:22.0px;height:182.6px;background:#f0f0f0;box-shadow:inset -1.5px -1.5px 0 #707070, inset 2px 2px 0 #fff, inset -3px -3px 0 #a8a8a8;"></div>
<div style="left:472.0px;top:332.0px;width:22.0px;height:23.5px;background:#f0f0f0;box-shadow:inset -1.5px -1.5px 0 #707070, inset 2px 2px 0 #fff, inset -3px -3px 0 #a8a8a8;"></div>
<svg style="left:477.9px;top:341.1px;" width="9.0" height="4.8" viewBox="0 0 9.0 4.8"><polygon points="0,0 9.0,0 4.5,4.8" fill="#000"/></svg>
<div style="left:278.5px;top:361.5px;width:189.0px;height:21.0px;background:#f4f4f4;"></div>
<div style="left:278.5px;top:361.5px;width:23.0px;height:21.0px;background:#f0f0f0;box-shadow:inset -1.5px -1.5px 0 #707070, inset 2px 2px 0 #fff, inset -3px -3px 0 #a8a8a8;"></div>
<svg style="left:286.6px;top:367.4px;" width="5.5" height="8.6" viewBox="0 0 5.5 8.6"><polygon points="5.5,0 5.5,8.6 0,4.3" fill="#000"/></svg>
<div style="left:444.5px;top:361.5px;width:23.0px;height:21.0px;background:#f0f0f0;box-shadow:inset -1.5px -1.5px 0 #707070, inset 2px 2px 0 #fff, inset -3px -3px 0 #a8a8a8;"></div>
<svg style="left:452.6px;top:367.4px;" width="5.5" height="8.6" viewBox="0 0 5.5 8.6"><polygon points="0,0 0,8.6 5.5,4.3" fill="#000"/></svg>
<div style="left:302.5px;top:361.5px;width:65.0px;height:21.0px;background:#f0f0f0;box-shadow:inset -1.5px -1.5px 0 #707070, inset 2px 2px 0 #fff, inset -3px -3px 0 #a8a8a8;"></div>
<svg style="left:305.4px;top:76.6px;" width="22.4" height="22.4" viewBox="0 0 22.4 22.4"><polygon points="11.2,0 11.2,6.047999999999999 6.047999999999999,11.2 0,11.2" fill="#a4e6f9"/><polygon points="11.2,0 22.4,11.2 16.352,11.2 11.2,6.047999999999999" fill="#2298d8"/><polygon points="0,11.2 6.047999999999999,11.2 11.2,16.352 11.2,22.4" fill="#1d92d0"/><polygon points="22.4,11.2 11.2,22.4 11.2,16.352 16.352,11.2" fill="#14759f"/><polygon points="11.2,6.047999999999999 16.352,11.2 11.2,16.352 6.047999999999999,11.2" fill="#22b9ee"/></svg>
<div class="t" style="top:78.0px;height:20px;line-height:20px;font-size:16px;color:#f6f6fa;left:334.6px;"><span style="letter-spacing:-1.52px">CLK</span></div>
<svg style="left:305.4px;top:101.7px;" width="22.4" height="22.4" viewBox="0 0 22.4 22.4"><polygon points="11.2,0 11.2,6.047999999999999 6.047999999999999,11.2 0,11.2" fill="#a4e6f9"/><polygon points="11.2,0 22.4,11.2 16.352,11.2 11.2,6.047999999999999" fill="#2298d8"/><polygon points="0,11.2 6.047999999999999,11.2 11.2,16.352 11.2,22.4" fill="#1d92d0"/><polygon points="22.4,11.2 11.2,22.4 11.2,16.352 16.352,11.2" fill="#14759f"/><polygon points="11.2,6.047999999999999 16.352,11.2 11.2,16.352 6.047999999999999,11.2" fill="#22b9ee"/></svg>
<div class="t" style="top:103.0px;height:20px;line-height:20px;font-size:16px;color:#f6f6fa;left:334.6px;"><span style="letter-spacing:-1.44px">LEDR</span></div>
<div style="left:296.0px;top:139.1px;width:10.0px;height:1.6px;background:#b0b4cc;"></div>
<svg style="left:283.5px;top:132.3px;" width="15.0" height="15.0" viewBox="0 0 15.0 15.0"><rect x="0" y="0" width="15.0" height="15.0" fill="#8890b8" opacity="0.55"/><rect x="0.6" y="0.4" width="13.0" height="12.8" fill="#fdfdff"/><rect x="3.3" y="6.0" width="7.4" height="2.1" fill="#101010"/><rect x="5.95" y="3.3" width="2.1" height="7.4" fill="#101010"/></svg>
<svg style="left:305.4px;top:126.8px;" width="22.4" height="22.4" viewBox="0 0 22.4 22.4"><polygon points="11.2,0 11.2,6.047999999999999 6.047999999999999,11.2 0,11.2" fill="#a4e6f9"/><polygon points="11.2,0 22.4,11.2 16.352,11.2 11.2,6.047999999999999" fill="#2298d8"/><polygon points="0,11.2 6.047999999999999,11.2 11.2,16.352 11.2,22.4" fill="#1d92d0"/><polygon points="22.4,11.2 11.2,22.4 11.2,16.352 16.352,11.2" fill="#14759f"/><polygon points="11.2,6.047999999999999 16.352,11.2 11.2,16.352 6.047999999999999,11.2" fill="#22b9ee"/></svg>
<div class="t" style="top:128.0px;height:20px;line-height:20px;font-size:16px;color:#f6f6fa;left:334.6px;"><span style="letter-spacing:0.09px">curr_instruction</span></div>
<div style="left:296.0px;top:164.2px;width:10.0px;height:1.6px;background:#b0b4cc;"></div>
<svg style="left:283.5px;top:157.4px;" width="15.0" height="15.0" viewBox="0 0 15.0 15.0"><rect x="0" y="0" width="15.0" height="15.0" fill="#8890b8" opacity="0.55"/><rect x="0.6" y="0.4" width="13.0" height="12.8" fill="#fdfdff"/><rect x="3.3" y="6.0" width="7.4" height="2.1" fill="#101010"/><rect x="5.95" y="3.3" width="2.1" height="7.4" fill="#101010"/></svg>
<svg style="left:305.4px;top:151.9px;" width="22.4" height="22.4" viewBox="0 0 22.4 22.4"><polygon points="11.2,0 11.2,6.047999999999999 6.047999999999999,11.2 0,11.2" fill="#a4e6f9"/><polygon points="11.2,0 22.4,11.2 16.352,11.2 11.2,6.047999999999999" fill="#2298d8"/><polygon points="0,11.2 6.047999999999999,11.2 11.2,16.352 11.2,22.4" fill="#1d92d0"/><polygon points="22.4,11.2 11.2,22.4 11.2,16.352 16.352,11.2" fill="#14759f"/><polygon points="11.2,6.047999999999999 16.352,11.2 11.2,16.352 6.047999999999999,11.2" fill="#22b9ee"/></svg>
<div class="t" style="top:153.0px;height:20px;line-height:20px;font-size:16px;color:#f6f6fa;left:334.6px;"><span style="letter-spacing:0.17px">rd1</span></div>
<div style="left:296.0px;top:189.3px;width:10.0px;height:1.6px;background:#b0b4cc;"></div>
<svg style="left:283.5px;top:182.5px;" width="15.0" height="15.0" viewBox="0 0 15.0 15.0"><rect x="0" y="0" width="15.0" height="15.0" fill="#8890b8" opacity="0.55"/><rect x="0.6" y="0.4" width="13.0" height="12.8" fill="#fdfdff"/><rect x="3.3" y="6.0" width="7.4" height="2.1" fill="#101010"/><rect x="5.95" y="3.3" width="2.1" height="7.4" fill="#101010"/></svg>
<svg style="left:305.4px;top:177.0px;" width="22.4" height="22.4" viewBox="0 0 22.4 22.4"><polygon points="11.2,0 11.2,6.047999999999999 6.047999999999999,11.2 0,11.2" fill="#a4e6f9"/><polygon points="11.2,0 22.4,11.2 16.352,11.2 11.2,6.047999999999999" fill="#2298d8"/><polygon points="0,11.2 6.047999999999999,11.2 11.2,16.352 11.2,22.4" fill="#1d92d0"/><polygon points="22.4,11.2 11.2,22.4 11.2,16.352 16.352,11.2" fill="#14759f"/><polygon points="11.2,6.047999999999999 16.352,11.2 11.2,16.352 6.047999999999999,11.2" fill="#22b9ee"/></svg>
<div class="t" style="top:178.0px;height:20px;line-height:20px;font-size:16px;color:#f6f6fa;left:334.6px;"><span style="letter-spacing:0.17px">rd2</span></div>
<div style="left:296.0px;top:214.4px;width:10.0px;height:1.6px;background:#b0b4cc;"></div>
<svg style="left:283.5px;top:207.6px;" width="15.0" height="15.0" viewBox="0 0 15.0 15.0"><rect x="0" y="0" width="15.0" height="15.0" fill="#8890b8" opacity="0.55"/><rect x="0.6" y="0.4" width="13.0" height="12.8" fill="#fdfdff"/><rect x="3.3" y="6.0" width="7.4" height="2.1" fill="#101010"/><rect x="5.95" y="3.3" width="2.1" height="7.4" fill="#101010"/></svg>
<svg style="left:305.4px;top:202.1px;" width="22.4" height="22.4" viewBox="0 0 22.4 22.4"><polygon points="11.2,0 11.2,6.047999999999999 6.047999999999999,11.2 0,11.2" fill="#a4e6f9"/><polygon points="11.2,0 22.4,11.2 16.352,11.2 11.2,6.047999999999999" fill="#2298d8"/><polygon points="0,11.2 6.047999999999999,11.2 11.2,16.352 11.2,22.4" fill="#1d92d0"/><polygon points="22.4,11.2 11.2,22.4 11.2,16.352 16.352,11.2" fill="#14759f"/><polygon points="11.2,6.047999999999999 16.352,11.2 11.2,16.352 6.047999999999999,11.2" fill="#22b9ee"/></svg>
<div class="t" style="top:203.0px;height:20px;line-height:20px;font-size:16px;color:#f6f6fa;left:334.6px;"><span style="letter-spacing:-0.33px">immediate</span></div>
<svg style="left:305.4px;top:227.2px;" width="22.4" height="22.4" viewBox="0 0 22.4 22.4"><polygon points="11.2,0 11.2,6.047999999999999 6.047999999999999,11.2 0,11.2" fill="#a4e6f9"/><polygon points="11.2,0 22.4,11.2 16.352,11.2 11.2,6.047999999999999" fill="#2298d8"/><polygon points="0,11.2 6.047999999999999,11.2 11.2,16.352 11.2,22.4" fill="#1d92d0"/><polygon points="22.4,11.2 11.2,22.4 11.2,16.352 16.352,11.2" fill="#14759f"/><polygon points="11.2,6.047999999999999 16.352,11.2 11.2,16.352 6.047999999999999,11.2" fill="#22b9ee"/></svg>
<div class="t" style="top:228.0px;height:20px;line-height:20px;font-size:16px;color:#f6f6fa;left:334.6px;"><span style="letter-spacing:-0.20px">alu_src</span></div>
<svg style="left:305.4px;top:252.3px;" width="22.4" height="22.4" viewBox="0 0 22.4 22.4"><polygon points="11.2,0 11.2,6.047999999999999 6.047999999999999,11.2 0,11.2" fill="#a4e6f9"/><polygon points="11.2,0 22.4,11.2 16.352,11.2 11.2,6.047999999999999" fill="#2298d8"/><polygon points="0,11.2 6.047999999999999,11.2 11.2,16.352 11.2,22.4" fill="#1d92d0"/><polygon points="22.4,11.2 11.2,22.4 11.2,16.352 16.352,11.2" fill="#14759f"/><polygon points="11.2,6.047999999999999 16.352,11.2 11.2,16.352 6.047999999999999,11.2" fill="#22b9ee"/></svg>
<div class="t" style="top:253.0px;height:20px;line-height:20px;font-size:16px;color:#f6f6fa;left:334.6px;"><span style="letter-spacing:-0.16px">mem_write</span></div>
<svg style="left:305.4px;top:277.4px;" width="22.4" height="22.4" viewBox="0 0 22.4 22.4"><polygon points="11.2,0 11.2,6.047999999999999 6.047999999999999,11.2 0,11.2" fill="#a4e6f9"/><polygon points="11.2,0 22.4,11.2 16.352,11.2 11.2,6.047999999999999" fill="#2298d8"/><polygon points="0,11.2 6.047999999999999,11.2 11.2,16.352 11.2,22.4" fill="#1d92d0"/><polygon points="22.4,11.2 11.2,22.4 11.2,16.352 16.352,11.2" fill="#14759f"/><polygon points="11.2,6.047999999999999 16.352,11.2 11.2,16.352 6.047999999999999,11.2" fill="#22b9ee"/></svg>
<div class="t" style="top:279.0px;height:20px;line-height:20px;font-size:16px;color:#f6f6fa;left:334.6px;"><span style="letter-spacing:-0.12px">mem_to_reg</span></div>
<svg style="left:305.4px;top:302.5px;" width="22.4" height="22.4" viewBox="0 0 22.4 22.4"><polygon points="11.2,0 11.2,6.047999999999999 6.047999999999999,11.2 0,11.2" fill="#a4e6f9"/><polygon points="11.2,0 22.4,11.2 16.352,11.2 11.2,6.047999999999999" fill="#2298d8"/><polygon points="0,11.2 6.047999999999999,11.2 11.2,16.352 11.2,22.4" fill="#1d92d0"/><polygon points="22.4,11.2 11.2,22.4 11.2,16.352 16.352,11.2" fill="#14759f"/><polygon points="11.2,6.047999999999999 16.352,11.2 11.2,16.352 6.047999999999999,11.2" fill="#22b9ee"/></svg>
<div class="t" style="top:304.0px;height:20px;line-height:20px;font-size:16px;color:#f6f6fa;left:334.6px;"><span style="letter-spacing:-0.23px">pc_src</span></div>
<svg style="left:305.4px;top:327.6px;" width="22.4" height="22.4" viewBox="0 0 22.4 22.4"><polygon points="11.2,0 11.2,6.047999999999999 6.047999999999999,11.2 0,11.2" fill="#a4e6f9"/><polygon points="11.2,0 22.4,11.2 16.352,11.2 11.2,6.047999999999999" fill="#2298d8"/><polygon points="0,11.2 6.047999999999999,11.2 11.2,16.352 11.2,22.4" fill="#1d92d0"/><polygon points="22.4,11.2 11.2,22.4 11.2,16.352 16.352,11.2" fill="#14759f"/><polygon points="11.2,6.047999999999999 16.352,11.2 11.2,16.352 6.047999999999999,11.2" fill="#22b9ee"/></svg>
<div class="t" style="top:329.0px;height:20px;line-height:20px;font-size:16px;color:#f6f6fa;left:334.6px;"><span style="letter-spacing:0.23px">regWrite</span></div>
<div style="left:316.0px;top:351.0px;width:1.2px;height:4.0px;background:#30b0e0;"></div>
<div style="left:275.5px;top:395.5px;width:221.5px;height:329.0px;background:#f0f0f0;box-shadow:inset 1.5px 1.5px 0 #fff, inset -1.5px 0 0 #9a9a9a;"></div>
<div style="left:275.0px;top:395.6px;width:222.0px;height:1.5px;background:#a6a6a6;"></div>
<div style="left:275.0px;top:395.6px;width:1.4px;height:329.0px;background:#a6a6a6;"></div>
<svg style="left:278.3px;top:399.4px;" width="25.0" height="25.0" viewBox="0 0 25.0 25.0"><g transform="translate(12.5,12.5)"><rect x="-2.7" y="-11.8" width="5.4" height="6" rx="1.6" fill="#557ea8" transform="rotate(0)"/><rect x="-2.7" y="-11.8" width="5.4" height="6" rx="1.6" fill="#557ea8" transform="rotate(45)"/><rect x="-2.7" y="-11.8" width="5.4" height="6" rx="1.6" fill="#557ea8" transform="rotate(90)"/><rect x="-2.7" y="-11.8" width="5.4" height="6" rx="1.6" fill="#557ea8" transform="rotate(135)"/><rect x="-2.7" y="-11.8" width="5.4" height="6" rx="1.6" fill="#557ea8" transform="rotate(180)"/><rect x="-2.7" y="-11.8" width="5.4" height="6" rx="1.6" fill="#557ea8" transform="rotate(225)"/><rect x="-2.7" y="-11.8" width="5.4" height="6" rx="1.6" fill="#557ea8" transform="rotate(270)"/><rect x="-2.7" y="-11.8" width="5.4" height="6" rx="1.6" fill="#557ea8" transform="rotate(315)"/><circle r="8.4" fill="#5a84ae"/><circle r="5" fill="none" stroke="#4a729c" stroke-width="1.2"/><circle r="2.7" fill="#fafcff"/></g></svg>
<div class="t" style="top:403.0px;height:20px;line-height:20px;font-size:16px;color:#101038;left:306.5px;"><span style="letter-spacing:-0.24px">sses (Active)</span></div>
<div style="left:303.0px;top:400.0px;width:3.5px;height:24.0px;background:#f0f0f0;"></div>
<svg style="left:401.3px;top:402.3px;" width="25.7" height="20.0" viewBox="0 0 25.7 20.0"><rect x="0.5" y="4.4" width="1.9" height="1.8" fill="#4a4a4a"/><rect x="5.0" y="4.4" width="1.9" height="1.8" fill="#4a4a4a"/><rect x="9.6" y="4.4" width="1.9" height="1.8" fill="#4a4a4a"/><rect x="14.1" y="4.4" width="1.9" height="1.8" fill="#4a4a4a"/><rect x="18.7" y="4.4" width="1.9" height="1.8" fill="#4a4a4a"/><rect x="23.2" y="4.4" width="1.9" height="1.8" fill="#4a4a4a"/><rect x="2.0" y="9.1" width="1.9" height="1.8" fill="#6a6a6a"/><rect x="6.5" y="9.1" width="1.9" height="1.8" fill="#6a6a6a"/><rect x="11.1" y="9.1" width="1.9" height="1.8" fill="#6a6a6a"/><rect x="15.6" y="9.1" width="1.9" height="1.8" fill="#6a6a6a"/><rect x="20.2" y="9.1" width="1.9" height="1.8" fill="#6a6a6a"/><rect x="24.8" y="9.1" width="1.9" height="1.8" fill="#6a6a6a"/><rect x="0.5" y="13.7" width="1.9" height="1.8" fill="#8a8a8a"/><rect x="5.0" y="13.7" width="1.9" height="1.8" fill="#8a8a8a"/><rect x="9.6" y="13.7" width="1.9" height="1.8" fill="#8a8a8a"/><rect x="14.1" y="13.7" width="1.9" height="1.8" fill="#8a8a8a"/><rect x="18.7" y="13.7" width="1.9" height="1.8" fill="#8a8a8a"/><rect x="23.2" y="13.7" width="1.9" height="1.8" fill="#8a8a8a"/></svg>
<div style="left:432.5px;top:404.7px;width:15.0px;height:15.8px;background:#f0f0f0;box-shadow:inset -1.5px -1.5px 0 #707070, inset 1px 1px 0 #fff;"></div>
<svg style="left:433.8px;top:406.1px;" width="12.0" height="12.0" viewBox="0 0 12.0 12.0"><rect x="0.3" y="4.6" width="11.2" height="2.6" fill="#000"/><rect x="4.6" y="0.3" width="2.6" height="11.2" fill="#000"/></svg>
<div style="left:453.0px;top:404.7px;width:15.0px;height:15.8px;background:#f0f0f0;box-shadow:inset -1.5px -1.5px 0 #707070, inset 1px 1px 0 #fff;"></div>
<svg style="left:454.3px;top:406.1px;" width="12.0" height="12.0" viewBox="0 0 12.0 12.0"><rect x="1.2" y="5.6" width="5.8" height="5.2" fill="none" stroke="#000" stroke-width="1.5"/><path d="M4 8 L10 2" stroke="#000" stroke-width="2.2" fill="none"/><polygon points="5.5,0.8 11.2,0.8 11.2,6.5" fill="#000"/></svg>
<div style="left:473.9px;top:404.7px;width:17.2px;height:15.8px;background:#f0f0f0;box-shadow:inset -1.5px -1.5px 0 #707070, inset 1px 1px 0 #fff;"></div>
<svg style="left:476.1px;top:406.3px;" width="12.0" height="12.0" viewBox="0 0 12.0 12.0"><path d="M0.8 1.2 L11.2 10.8 M11.2 1.2 L0.8 10.8" stroke="#000" stroke-width="2.1" fill="none"/></svg>
<div style="left:278.5px;top:425.2px;width:215.0px;height:25.3px;background:#f0f0f0;box-shadow:inset 0 -1.6px 0 #8a8a8a, inset 0 1.3px 0 #8e8e8e, inset 0 2.8px 0 #fff;"></div>
<svg style="left:280.6px;top:434.4px;" width="10.4" height="9.4" viewBox="0 0 10.4 9.4"><polygon points="0,0 10.4,0 5.2,9.4" fill="#484848"/></svg>
<div style="left:292.0px;top:426.0px;width:1.7px;height:24.5px;background:#787878;"></div>
<div class="t" style="top:431.0px;height:20px;line-height:20px;font-size:16px;color:#101038;left:296.0px;"><span style="letter-spacing:-0.70px">Name</span></div>
<div style="left:278.5px;top:450.5px;width:215.0px;height:274.0px;background:#8ca5fb;"></div>
<div style="left:278.5px;top:456.0px;width:215.0px;height:23.5px;background:#c1cedc;"></div>
<svg style="left:306.7px;top:457.7px;" width="19.6" height="19.6" viewBox="0 0 19.6 19.6"><defs><radialGradient id="sg6" cx="0.3" cy="0.3" r="0.8"><stop offset="0" stop-color="#58d6f2"/><stop offset="0.42" stop-color="#3cc4e6"/><stop offset="0.5" stop-color="#2295b6"/><stop offset="1" stop-color="#1f8cac"/></radialGradient></defs><circle cx="9.8" cy="9.8" r="9.600000000000001" fill="url(#sg6)"/><ellipse cx="5.096000000000001" cy="4.9" rx="2.4" ry="1.5" transform="rotate(-35 5.096000000000001 4.9)" fill="#f4fdff"/></svg>
<div class="t" style="top:458.0px;height:20px;line-height:20px;font-size:16px;color:#101038;left:335.0px;"><span style="letter-spacing:0.56px">#INITIAL#21</span></div>
<svg style="left:306.7px;top:482.8px;" width="19.6" height="19.6" viewBox="0 0 19.6 19.6"><defs><radialGradient id="sg7" cx="0.3" cy="0.3" r="0.8"><stop offset="0" stop-color="#58d6f2"/><stop offset="0.42" stop-color="#3cc4e6"/><stop offset="0.5" stop-color="#2295b6"/><stop offset="1" stop-color="#1f8cac"/></radialGradient></defs><circle cx="9.8" cy="9.8" r="9.600000000000001" fill="url(#sg7)"/><ellipse cx="5.096000000000001" cy="4.9" rx="2.4" ry="1.5" transform="rotate(-35 5.096000000000001 4.9)" fill="#f4fdff"/></svg>
<div class="t" style="top:483.0px;height:20px;line-height:20px;font-size:16px;color:#f4f6ff;left:335.0px;"><span style="letter-spacing:0.26px">#ALWAYS#29</span></div>
<div style="left:506.4px;top:16.0px;width:4.0px;height:708.5px;background:#fbfbfb;"></div>
<div style="left:509.5px;top:16.0px;width:1382.5px;height:708.5px;background:#f0f0f0;"></div>
<div style="left:510.2px;top:49.0px;width:3.3px;height:675.0px;background:#a4a4a4;"></div>
<div style="left:1892.0px;top:5.0px;width:1.2px;height:719.5px;background:#303048;"></div>
<div style="left:1887.5px;top:15.0px;width:4.5px;height:709.5px;background:#c8c8c8;"></div>
<div style="left:506.4px;top:16.0px;width:1381.5px;height:3.7px;background:#fcfcfc;"></div>
<div style="left:506.4px;top:45.5px;width:1381.5px;height:4.0px;background:#fcfcfc;"></div>
<div style="left:510.2px;top:19.7px;width:1378.3px;height:25.8px;background:#9fb6d2;"></div>
<div style="left:510.2px;top:18.4px;width:1378.3px;height:1.6px;background:#c4d4e6;"></div>
<svg style="left:511.0px;top:21.0px;" width="24.0" height="24.0" viewBox="0 0 24.0 24.0"><rect x="0" y="0" width="23.6" height="23.2" fill="#404850"/><rect x="0" y="0" width="22.2" height="21.8" fill="#ffffff"/><rect x="1.3" y="1.3" width="20.9" height="20.5" fill="#ececec"/><rect x="3" y="2.4" width="17.8" height="3.1" fill="#ffffff"/><rect x="2.9" y="8.1" width="17.7" height="11.8" fill="#000"/><path d="M3 12.5 H6.5 V9.5 H12 V13.5 H20.5 M3 16.5 H7 M9.5 19.5 V16.5 H12.5 V19.5" stroke="#18a838" stroke-width="1.5" fill="none"/><rect x="8.3" y="8.1" width="2" height="11.8" fill="#30d8d8"/><rect x="13.4" y="16.2" width="7" height="3" fill="#3010c0"/></svg>
<div class="t" style="top:23.0px;height:20px;line-height:20px;font-size:16px;color:#101038;left:539.5px;"><span style="letter-spacing:0.18px">Wave - Default</span></div>
<svg style="left:0;top:0" width="1904" height="60" viewBox="0 0 1904 60"><rect x="655" y="26.3" width="567.3" height="2.5" fill="#c6ecfc"/><rect x="655.8" y="28.8" width="567.3" height="2.6" fill="#3d4d62"/><rect x="655" y="33.7" width="567.3" height="2.5" fill="#c6ecfc"/><rect x="655.8" y="36.0" width="567.3" height="2.6" fill="#3d4d62"/><rect x="1254.9" y="26.3" width="565.8" height="2.5" fill="#c6ecfc"/><rect x="1255.7" y="28.8" width="565.8" height="2.6" fill="#3d4d62"/><rect x="1254.9" y="33.7" width="565.8" height="2.5" fill="#c6ecfc"/><rect x="1255.7" y="36.0" width="565.8" height="2.6" fill="#3d4d62"/><rect x="1225.0" y="26.7" width="1.7" height="1.7" fill="#f4fbff"/><rect x="1226.2" y="28.0" width="1.8" height="1.8" fill="#283648"/><rect x="1229.7" y="26.7" width="1.7" height="1.7" fill="#f4fbff"/><rect x="1230.9" y="28.0" width="1.8" height="1.8" fill="#283648"/><rect x="1234.4" y="26.7" width="1.7" height="1.7" fill="#f4fbff"/><rect x="1235.6" y="28.0" width="1.8" height="1.8" fill="#283648"/><rect x="1239.1" y="26.7" width="1.7" height="1.7" fill="#f4fbff"/><rect x="1240.3" y="28.0" width="1.8" height="1.8" fill="#283648"/><rect x="1243.8" y="26.7" width="1.7" height="1.7" fill="#f4fbff"/><rect x="1245.0" y="28.0" width="1.8" height="1.8" fill="#283648"/><rect x="1248.5" y="26.7" width="1.7" height="1.7" fill="#f4fbff"/><rect x="1249.7" y="28.0" width="1.8" height="1.8" fill="#283648"/><rect x="1226.5" y="31.1" width="1.7" height="1.7" fill="#f4fbff"/><rect x="1227.7" y="32.4" width="1.8" height="1.8" fill="#283648"/><rect x="1231.2" y="31.1" width="1.7" height="1.7" fill="#f4fbff"/><rect x="1232.4" y="32.4" width="1.8" height="1.8" fill="#283648"/><rect x="1235.9" y="31.1" width="1.7" height="1.7" fill="#f4fbff"/><rect x="1237.1" y="32.4" width="1.8" height="1.8" fill="#283648"/><rect x="1240.6" y="31.1" width="1.7" height="1.7" fill="#f4fbff"/><rect x="1241.8" y="32.4" width="1.8" height="1.8" fill="#283648"/><rect x="1245.3" y="31.1" width="1.7" height="1.7" fill="#f4fbff"/><rect x="1246.5" y="32.4" width="1.8" height="1.8" fill="#283648"/><rect x="1250.0" y="31.1" width="1.7" height="1.7" fill="#f4fbff"/><rect x="1251.2" y="32.4" width="1.8" height="1.8" fill="#283648"/><rect x="1225.0" y="35.7" width="1.7" height="1.7" fill="#f4fbff"/><rect x="1226.2" y="37.0" width="1.8" height="1.8" fill="#283648"/><rect x="1229.7" y="35.7" width="1.7" height="1.7" fill="#f4fbff"/><rect x="1230.9" y="37.0" width="1.8" height="1.8" fill="#283648"/><rect x="1234.4" y="35.7" width="1.7" height="1.7" fill="#f4fbff"/><rect x="1235.6" y="37.0" width="1.8" height="1.8" fill="#283648"/><rect x="1239.1" y="35.7" width="1.7" height="1.7" fill="#f4fbff"/><rect x="1240.3" y="37.0" width="1.8" height="1.8" fill="#283648"/><rect x="1243.8" y="35.7" width="1.7" height="1.7" fill="#f4fbff"/><rect x="1245.0" y="37.0" width="1.8" height="1.8" fill="#283648"/><rect x="1248.5" y="35.7" width="1.7" height="1.7" fill="#f4fbff"/><rect x="1249.7" y="37.0" width="1.8" height="1.8" fill="#283648"/></svg>
<div style="left:1826.1px;top:23.5px;width:15.0px;height:15.8px;background:#f0f0f0;box-shadow:inset -1.5px -1.5px 0 #707070, inset 1px 1px 0 #fff;"></div>
<svg style="left:1827.4px;top:24.9px;" width="12.0" height="12.0" viewBox="0 0 12.0 12.0"><rect x="0.3" y="4.6" width="11.2" height="2.6" fill="#000"/><rect x="4.6" y="0.3" width="2.6" height="11.2" fill="#000"/></svg>
<div style="left:1846.8px;top:23.5px;width:15.0px;height:15.8px;background:#f0f0f0;box-shadow:inset -1.5px -1.5px 0 #707070, inset 1px 1px 0 #fff;"></div>
<svg style="left:1848.1px;top:24.9px;" width="12.0" height="12.0" viewBox="0 0 12.0 12.0"><rect x="1.2" y="5.6" width="5.8" height="5.2" fill="none" stroke="#000" stroke-width="1.5"/><path d="M4 8 L10 2" stroke="#000" stroke-width="2.2" fill="none"/><polygon points="5.5,0.8 11.2,0.8 11.2,6.5" fill="#000"/></svg>
<div style="left:1867.9px;top:23.5px;width:17.2px;height:15.8px;background:#f0f0f0;box-shadow:inset -1.5px -1.5px 0 #707070, inset 1px 1px 0 #fff;"></div>
<svg style="left:1870.1px;top:25.1px;" width="12.0" height="12.0" viewBox="0 0 12.0 12.0"><path d="M0.8 1.2 L11.2 10.8 M11.2 1.2 L0.8 10.8" stroke="#000" stroke-width="2.1" fill="none"/></svg>
<div style="left:513.0px;top:49.5px;width:387.0px;height:672.0px;background:#808080;"></div>
<div style="left:513.5px;top:80.5px;width:12.0px;height:548.0px;background:#fff;"></div>
<div style="left:747.5px;top:49.5px;width:3.5px;height:672.0px;background:#fff;"></div>
<div style="left:747.7px;top:49.5px;width:1.0px;height:672.0px;background:#b0b0b0;"></div>
<div style="left:513.0px;top:77.5px;width:387.0px;height:3.0px;background:#fff;"></div>
<div style="left:513.0px;top:628.7px;width:387.0px;height:5.0px;background:#e0e0e0;"></div>
<div style="left:513.0px;top:629.5px;width:387.0px;height:2.5px;background:#fff;"></div>
<div class="t" style="top:54.0px;height:20px;line-height:20px;font-size:16px;color:#e8e8e8;right:1012.0px;"><span style="letter-spacing:-0.70px">Msgs</span></div>
<svg style="left:526.0px;top:50.2px;" width="26.0" height="27.0" viewBox="0 0 26.0 27.0"><g transform="translate(-278,-19)"><polygon points="279,29.2 288,20.4 293,25 287,30.6 279.4,30.6" fill="#c838e8" stroke="#a020c0" stroke-width="0.8"/><rect x="292" y="28" width="10.4" height="11.8" fill="#28b048" stroke="#188830" stroke-width="0.8"/><ellipse cx="292.8" cy="29.8" rx="5.1" ry="4.5" fill="#28e8f8" stroke="#7098b0" stroke-width="0.9"/><polygon points="279,36.7 286.7,29.2 293.8,36.7 286.7,44.3" fill="#1058e0"/></g></svg>
<svg style="left:556.7px;top:63.2px;" width="7.6" height="4.4" viewBox="0 0 7.6 4.4"><polygon points="0,0 7.6,0 3.8,4.4" fill="#000"/></svg>
<div style="left:513px;top:80px;width:387px;height:548.7px;overflow:hidden;">
<svg style="left:42.0px;top:-12.5px;" width="22.4" height="22.4" viewBox="0 0 22.4 22.4"><polygon points="11.2,0 11.2,6.047999999999999 6.047999999999999,11.2 0,11.2" fill="#a4e6f9"/><polygon points="11.2,0 22.4,11.2 16.352,11.2 11.2,6.047999999999999" fill="#2298d8"/><polygon points="0,11.2 6.047999999999999,11.2 11.2,16.352 11.2,22.4" fill="#1d92d0"/><polygon points="22.4,11.2 11.2,22.4 11.2,16.352 16.352,11.2" fill="#14759f"/><polygon points="11.2,6.047999999999999 16.352,11.2 11.2,16.352 6.047999999999999,11.2" fill="#22b9ee"/></svg>
<svg style="left:53.0px;top:0.8px;" width="12.0" height="10.0" viewBox="0 0 12.0 10.0"><polygon points="0,4 5,0 11,3 8,9 3,9" fill="#50d030"/></svg>
<div class="t" style="top:-11.0px;height:20px;line-height:20px;font-size:16px;color:#f0f0f0;left:71.5px;width:163.0px;overflow:hidden;right:auto;"><span style="letter-spacing:0.50px">/tb/lab05/</span><span style="letter-spacing:-1.44px">LEDR</span></div>
<div class="t" style="top:-11.0px;height:20px;line-height:20px;font-size:16px;color:#f0f0f0;left:241.5px;right:auto;"><span style="letter-spacing:-0.04px">0</span></div>
<svg style="left:42.0px;top:11.2px;" width="22.4" height="22.4" viewBox="0 0 22.4 22.4"><polygon points="11.2,0 11.2,6.047999999999999 6.047999999999999,11.2 0,11.2" fill="#a4e6f9"/><polygon points="11.2,0 22.4,11.2 16.352,11.2 11.2,6.047999999999999" fill="#2298d8"/><polygon points="0,11.2 6.047999999999999,11.2 11.2,16.352 11.2,22.4" fill="#1d92d0"/><polygon points="22.4,11.2 11.2,22.4 11.2,16.352 16.352,11.2" fill="#14759f"/><polygon points="11.2,6.047999999999999 16.352,11.2 11.2,16.352 6.047999999999999,11.2" fill="#22b9ee"/></svg>
<div class="t" style="top:12.0px;height:20px;line-height:20px;font-size:16px;color:#f0f0f0;left:71.5px;width:163.0px;overflow:hidden;right:auto;"><span style="letter-spacing:0.50px">/tb/lab05/</span><span style="letter-spacing:-1.35px">PLL_CLK</span></div>
<div class="t" style="top:12.0px;height:20px;line-height:20px;font-size:16px;color:#f0f0f0;left:241.5px;right:auto;"><span style="letter-spacing:-0.04px">0</span></div>
<div style="left:35.0px;top:48.2px;width:8.0px;height:2.0px;background:#d4d4d4;"></div>
<svg style="left:20.8px;top:41.4px;" width="15.0" height="15.0" viewBox="0 0 15.0 15.0"><rect x="0" y="0" width="15.0" height="15.0" fill="#8890b8" opacity="0.55"/><rect x="0.6" y="0.4" width="13.0" height="12.8" fill="#fdfdff"/><rect x="3.3" y="6.0" width="7.4" height="2.1" fill="#101010"/><rect x="5.95" y="3.3" width="2.1" height="7.4" fill="#101010"/></svg>
<svg style="left:42.0px;top:36.3px;" width="22.4" height="22.4" viewBox="0 0 22.4 22.4"><polygon points="11.2,0 11.2,6.047999999999999 6.047999999999999,11.2 0,11.2" fill="#a4e6f9"/><polygon points="11.2,0 22.4,11.2 16.352,11.2 11.2,6.047999999999999" fill="#2298d8"/><polygon points="0,11.2 6.047999999999999,11.2 11.2,16.352 11.2,22.4" fill="#1d92d0"/><polygon points="22.4,11.2 11.2,22.4 11.2,16.352 16.352,11.2" fill="#14759f"/><polygon points="11.2,6.047999999999999 16.352,11.2 11.2,16.352 6.047999999999999,11.2" fill="#22b9ee"/></svg>
<div class="t" style="top:37.0px;height:20px;line-height:20px;font-size:16px;color:#f0f0f0;left:71.5px;width:163.0px;overflow:hidden;right:auto;"><span style="letter-spacing:0.50px">/tb/lab05/</span><span style="letter-spacing:-0.33px">immediate</span></div>
<div class="t" style="top:37.0px;height:20px;line-height:20px;font-size:16px;color:#f0f0f0;left:241.5px;right:auto;"><span style="letter-spacing:0.27px">-1</span></div>
<div style="left:35.0px;top:73.2px;width:8.0px;height:2.0px;background:#d4d4d4;"></div>
<svg style="left:20.8px;top:66.5px;" width="15.0" height="15.0" viewBox="0 0 15.0 15.0"><rect x="0" y="0" width="15.0" height="15.0" fill="#8890b8" opacity="0.55"/><rect x="0.6" y="0.4" width="13.0" height="12.8" fill="#fdfdff"/><rect x="3.3" y="6.0" width="7.4" height="2.1" fill="#101010"/><rect x="5.95" y="3.3" width="2.1" height="7.4" fill="#101010"/></svg>
<svg style="left:42.0px;top:61.4px;" width="22.4" height="22.4" viewBox="0 0 22.4 22.4"><polygon points="11.2,0 11.2,6.047999999999999 6.047999999999999,11.2 0,11.2" fill="#a4e6f9"/><polygon points="11.2,0 22.4,11.2 16.352,11.2 11.2,6.047999999999999" fill="#2298d8"/><polygon points="0,11.2 6.047999999999999,11.2 11.2,16.352 11.2,22.4" fill="#1d92d0"/><polygon points="22.4,11.2 11.2,22.4 11.2,16.352 16.352,11.2" fill="#14759f"/><polygon points="11.2,6.047999999999999 16.352,11.2 11.2,16.352 6.047999999999999,11.2" fill="#22b9ee"/></svg>
<div class="t" style="top:63.0px;height:20px;line-height:20px;font-size:16px;color:#f0f0f0;left:71.5px;width:163.0px;overflow:hidden;right:auto;"><span style="letter-spacing:0.50px">/tb/lab05/</span><span style="letter-spacing:-0.07px">program_</span><span style="letter-spacing:0.90px">...</span></div>
<div class="t" style="top:63.0px;height:20px;line-height:20px;font-size:16px;color:#f0f0f0;left:241.5px;right:auto;"><span style="letter-spacing:-0.04px">21</span></div>
<div style="left:35.0px;top:98.3px;width:8.0px;height:2.0px;background:#d4d4d4;"></div>
<svg style="left:20.8px;top:91.5px;" width="15.0" height="15.0" viewBox="0 0 15.0 15.0"><rect x="0" y="0" width="15.0" height="15.0" fill="#8890b8" opacity="0.55"/><rect x="0.6" y="0.4" width="13.0" height="12.8" fill="#fdfdff"/><rect x="3.3" y="6.0" width="7.4" height="2.1" fill="#101010"/><rect x="5.95" y="3.3" width="2.1" height="7.4" fill="#101010"/></svg>
<svg style="left:42.0px;top:86.4px;" width="22.4" height="22.4" viewBox="0 0 22.4 22.4"><polygon points="11.2,0 11.2,6.047999999999999 6.047999999999999,11.2 0,11.2" fill="#a4e6f9"/><polygon points="11.2,0 22.4,11.2 16.352,11.2 11.2,6.047999999999999" fill="#2298d8"/><polygon points="0,11.2 6.047999999999999,11.2 11.2,16.352 11.2,22.4" fill="#1d92d0"/><polygon points="22.4,11.2 11.2,22.4 11.2,16.352 16.352,11.2" fill="#14759f"/><polygon points="11.2,6.047999999999999 16.352,11.2 11.2,16.352 6.047999999999999,11.2" fill="#22b9ee"/></svg>
<div class="t" style="top:88.0px;height:20px;line-height:20px;font-size:16px;color:#f0f0f0;left:71.5px;width:163.0px;overflow:hidden;right:auto;"><span style="letter-spacing:0.50px">/tb/lab05/</span><span style="letter-spacing:0.34px">next_pro</span><span style="letter-spacing:0.90px">...</span></div>
<div class="t" style="top:88.0px;height:20px;line-height:20px;font-size:16px;color:#f0f0f0;left:241.5px;right:auto;"><span style="letter-spacing:-0.04px">21</span></div>
<div style="left:35.0px;top:123.4px;width:8.0px;height:2.0px;background:#d4d4d4;"></div>
<svg style="left:20.8px;top:116.6px;" width="15.0" height="15.0" viewBox="0 0 15.0 15.0"><rect x="0" y="0" width="15.0" height="15.0" fill="#8890b8" opacity="0.55"/><rect x="0.6" y="0.4" width="13.0" height="12.8" fill="#fdfdff"/><rect x="3.3" y="6.0" width="7.4" height="2.1" fill="#101010"/><rect x="5.95" y="3.3" width="2.1" height="7.4" fill="#101010"/></svg>
<svg style="left:42.0px;top:111.5px;" width="22.4" height="22.4" viewBox="0 0 22.4 22.4"><polygon points="11.2,0 11.2,6.047999999999999 6.047999999999999,11.2 0,11.2" fill="#a4e6f9"/><polygon points="11.2,0 22.4,11.2 16.352,11.2 11.2,6.047999999999999" fill="#2298d8"/><polygon points="0,11.2 6.047999999999999,11.2 11.2,16.352 11.2,22.4" fill="#1d92d0"/><polygon points="22.4,11.2 11.2,22.4 11.2,16.352 16.352,11.2" fill="#14759f"/><polygon points="11.2,6.047999999999999 16.352,11.2 11.2,16.352 6.047999999999999,11.2" fill="#22b9ee"/></svg>
<div class="t" style="top:113.0px;height:20px;line-height:20px;font-size:16px;color:#f0f0f0;left:71.5px;width:163.0px;overflow:hidden;right:auto;"><span style="letter-spacing:0.50px">/tb/lab05/</span><span style="letter-spacing:0.12px">curr_instr</span><span style="letter-spacing:0.90px">...</span></div>
<div class="t" style="top:113.0px;height:20px;line-height:20px;font-size:16px;color:#f0f0f0;left:241.5px;right:auto;"><span style="letter-spacing:1.71px">ffffffff</span></div>
<div style="left:35.0px;top:148.5px;width:8.0px;height:2.0px;background:#d4d4d4;"></div>
<svg style="left:20.8px;top:141.7px;" width="15.0" height="15.0" viewBox="0 0 15.0 15.0"><rect x="0" y="0" width="15.0" height="15.0" fill="#8890b8" opacity="0.55"/><rect x="0.6" y="0.4" width="13.0" height="12.8" fill="#fdfdff"/><rect x="3.3" y="6.0" width="7.4" height="2.1" fill="#101010"/><rect x="5.95" y="3.3" width="2.1" height="7.4" fill="#101010"/></svg>
<svg style="left:42.0px;top:136.6px;" width="22.4" height="22.4" viewBox="0 0 22.4 22.4"><polygon points="11.2,0 11.2,6.047999999999999 6.047999999999999,11.2 0,11.2" fill="#a4e6f9"/><polygon points="11.2,0 22.4,11.2 16.352,11.2 11.2,6.047999999999999" fill="#2298d8"/><polygon points="0,11.2 6.047999999999999,11.2 11.2,16.352 11.2,22.4" fill="#1d92d0"/><polygon points="22.4,11.2 11.2,22.4 11.2,16.352 16.352,11.2" fill="#14759f"/><polygon points="11.2,6.047999999999999 16.352,11.2 11.2,16.352 6.047999999999999,11.2" fill="#22b9ee"/></svg>
<div class="t" style="top:138.0px;height:20px;line-height:20px;font-size:16px;color:#f0f0f0;left:71.5px;width:163.0px;overflow:hidden;right:auto;"><span style="letter-spacing:0.50px">/tb/lab05/</span><span style="letter-spacing:-0.20px">alu_in2</span></div>
<div class="t" style="top:138.0px;height:20px;line-height:20px;font-size:16px;color:#f0f0f0;left:241.5px;right:auto;"><span style="letter-spacing:-0.04px">0</span></div>
<div style="left:35.0px;top:173.5px;width:8.0px;height:2.0px;background:#d4d4d4;"></div>
<svg style="left:20.8px;top:166.8px;" width="15.0" height="15.0" viewBox="0 0 15.0 15.0"><rect x="0" y="0" width="15.0" height="15.0" fill="#8890b8" opacity="0.55"/><rect x="0.6" y="0.4" width="13.0" height="12.8" fill="#fdfdff"/><rect x="3.3" y="6.0" width="7.4" height="2.1" fill="#101010"/><rect x="5.95" y="3.3" width="2.1" height="7.4" fill="#101010"/></svg>
<svg style="left:42.0px;top:161.7px;" width="22.4" height="22.4" viewBox="0 0 22.4 22.4"><polygon points="11.2,0 11.2,6.047999999999999 6.047999999999999,11.2 0,11.2" fill="#a4e6f9"/><polygon points="11.2,0 22.4,11.2 16.352,11.2 11.2,6.047999999999999" fill="#2298d8"/><polygon points="0,11.2 6.047999999999999,11.2 11.2,16.352 11.2,22.4" fill="#1d92d0"/><polygon points="22.4,11.2 11.2,22.4 11.2,16.352 16.352,11.2" fill="#14759f"/><polygon points="11.2,6.047999999999999 16.352,11.2 11.2,16.352 6.047999999999999,11.2" fill="#22b9ee"/></svg>
<div class="t" style="top:163.0px;height:20px;line-height:20px;font-size:16px;color:#f0f0f0;left:71.5px;width:163.0px;overflow:hidden;right:auto;"><span style="letter-spacing:0.50px">/tb/lab05/</span><span style="letter-spacing:-0.03px">ALU_output</span></div>
<div class="t" style="top:163.0px;height:20px;line-height:20px;font-size:16px;color:#f0f0f0;left:241.5px;right:auto;"><span style="letter-spacing:-0.04px">0</span></div>
<svg style="left:42.0px;top:186.7px;" width="22.4" height="22.4" viewBox="0 0 22.4 22.4"><polygon points="11.2,0 11.2,6.047999999999999 6.047999999999999,11.2 0,11.2" fill="#a4e6f9"/><polygon points="11.2,0 22.4,11.2 16.352,11.2 11.2,6.047999999999999" fill="#2298d8"/><polygon points="0,11.2 6.047999999999999,11.2 11.2,16.352 11.2,22.4" fill="#1d92d0"/><polygon points="22.4,11.2 11.2,22.4 11.2,16.352 16.352,11.2" fill="#14759f"/><polygon points="11.2,6.047999999999999 16.352,11.2 11.2,16.352 6.047999999999999,11.2" fill="#22b9ee"/></svg>
<div class="t" style="top:188.0px;height:20px;line-height:20px;font-size:16px;color:#f0f0f0;left:71.5px;width:163.0px;overflow:hidden;right:auto;"><span style="letter-spacing:0.50px">/tb/lab05/</span><span style="letter-spacing:-0.03px">zero</span></div>
<div class="t" style="top:188.0px;height:20px;line-height:20px;font-size:16px;color:#f0f0f0;left:241.5px;right:auto;"><span style="letter-spacing:-0.04px">0</span></div>
<div style="left:35.0px;top:223.7px;width:8.0px;height:2.0px;background:#d4d4d4;"></div>
<svg style="left:20.8px;top:216.9px;" width="15.0" height="15.0" viewBox="0 0 15.0 15.0"><rect x="0" y="0" width="15.0" height="15.0" fill="#8890b8" opacity="0.55"/><rect x="0.6" y="0.4" width="13.0" height="12.8" fill="#fdfdff"/><rect x="3.3" y="6.0" width="7.4" height="2.1" fill="#101010"/><rect x="5.95" y="3.3" width="2.1" height="7.4" fill="#101010"/></svg>
<svg style="left:42.0px;top:211.8px;" width="22.4" height="22.4" viewBox="0 0 22.4 22.4"><polygon points="11.2,0 11.2,6.047999999999999 6.047999999999999,11.2 0,11.2" fill="#a4e6f9"/><polygon points="11.2,0 22.4,11.2 16.352,11.2 11.2,6.047999999999999" fill="#2298d8"/><polygon points="0,11.2 6.047999999999999,11.2 11.2,16.352 11.2,22.4" fill="#1d92d0"/><polygon points="22.4,11.2 11.2,22.4 11.2,16.352 16.352,11.2" fill="#14759f"/><polygon points="11.2,6.047999999999999 16.352,11.2 11.2,16.352 6.047999999999999,11.2" fill="#22b9ee"/></svg>
<div class="t" style="top:213.0px;height:20px;line-height:20px;font-size:16px;color:#f0f0f0;left:71.5px;width:163.0px;overflow:hidden;right:auto;"><span style="letter-spacing:0.50px">/tb/lab05/</span><span style="letter-spacing:0.10px">control</span></div>
<div class="t" style="top:213.0px;height:20px;line-height:20px;font-size:16px;color:#f0f0f0;left:241.5px;right:auto;"><span style="letter-spacing:-0.04px">1</span></div>
<div style="left:35.0px;top:248.8px;width:8.0px;height:2.0px;background:#d4d4d4;"></div>
<svg style="left:20.8px;top:242.0px;" width="15.0" height="15.0" viewBox="0 0 15.0 15.0"><rect x="0" y="0" width="15.0" height="15.0" fill="#8890b8" opacity="0.55"/><rect x="0.6" y="0.4" width="13.0" height="12.8" fill="#fdfdff"/><rect x="3.3" y="6.0" width="7.4" height="2.1" fill="#101010"/><rect x="5.95" y="3.3" width="2.1" height="7.4" fill="#101010"/></svg>
<svg style="left:42.0px;top:236.9px;" width="22.4" height="22.4" viewBox="0 0 22.4 22.4"><polygon points="11.2,0 11.2,6.047999999999999 6.047999999999999,11.2 0,11.2" fill="#a4e6f9"/><polygon points="11.2,0 22.4,11.2 16.352,11.2 11.2,6.047999999999999" fill="#2298d8"/><polygon points="0,11.2 6.047999999999999,11.2 11.2,16.352 11.2,22.4" fill="#1d92d0"/><polygon points="22.4,11.2 11.2,22.4 11.2,16.352 16.352,11.2" fill="#14759f"/><polygon points="11.2,6.047999999999999 16.352,11.2 11.2,16.352 6.047999999999999,11.2" fill="#22b9ee"/></svg>
<div class="t" style="top:238.0px;height:20px;line-height:20px;font-size:16px;color:#f0f0f0;left:71.5px;width:163.0px;overflow:hidden;right:auto;"><span style="letter-spacing:0.50px">/tb/lab05/</span><span style="letter-spacing:0.17px">ram_output</span></div>
<div class="t" style="top:238.0px;height:20px;line-height:20px;font-size:16px;color:#f0f0f0;left:241.5px;right:auto;"><span style="letter-spacing:-0.04px">720</span></div>
<div style="left:35.0px;top:273.9px;width:8.0px;height:2.0px;background:#d4d4d4;"></div>
<svg style="left:20.8px;top:267.1px;" width="15.0" height="15.0" viewBox="0 0 15.0 15.0"><rect x="0" y="0" width="15.0" height="15.0" fill="#8890b8" opacity="0.55"/><rect x="0.6" y="0.4" width="13.0" height="12.8" fill="#fdfdff"/><rect x="3.3" y="6.0" width="7.4" height="2.1" fill="#101010"/><rect x="5.95" y="3.3" width="2.1" height="7.4" fill="#101010"/></svg>
<svg style="left:42.0px;top:261.9px;" width="22.4" height="22.4" viewBox="0 0 22.4 22.4"><polygon points="11.2,0 11.2,6.047999999999999 6.047999999999999,11.2 0,11.2" fill="#a4e6f9"/><polygon points="11.2,0 22.4,11.2 16.352,11.2 11.2,6.047999999999999" fill="#2298d8"/><polygon points="0,11.2 6.047999999999999,11.2 11.2,16.352 11.2,22.4" fill="#1d92d0"/><polygon points="22.4,11.2 11.2,22.4 11.2,16.352 16.352,11.2" fill="#14759f"/><polygon points="11.2,6.047999999999999 16.352,11.2 11.2,16.352 6.047999999999999,11.2" fill="#22b9ee"/></svg>
<div class="t" style="top:263.0px;height:20px;line-height:20px;font-size:16px;color:#f0f0f0;left:71.5px;width:163.0px;overflow:hidden;right:auto;"><span style="letter-spacing:0.50px">/tb/lab05/</span><span style="letter-spacing:0.11px">wd</span></div>
<div class="t" style="top:263.0px;height:20px;line-height:20px;font-size:16px;color:#f0f0f0;left:241.5px;right:auto;"><span style="letter-spacing:-0.04px">0</span></div>
<div style="left:12.5px;top:287.1px;width:222.0px;height:24.6px;background:#fff;"></div>
<div style="left:238.0px;top:287.1px;width:148.5px;height:24.6px;background:#fff;"></div>
<div style="left:35.0px;top:298.9px;width:8.0px;height:2.0px;background:#fff;"></div>
<svg style="left:20.8px;top:292.1px;" width="15.0" height="15.0" viewBox="0 0 15.0 15.0"><rect x="0" y="0" width="15.0" height="15.0" fill="#8890b8" opacity="0.55"/><rect x="0.6" y="0.4" width="13.0" height="12.8" fill="#fdfdff"/><rect x="3.3" y="6.0" width="7.4" height="2.1" fill="#101010"/><rect x="5.95" y="3.3" width="2.1" height="7.4" fill="#101010"/></svg>
<svg style="left:42.0px;top:287.0px;" width="22.4" height="22.4" viewBox="0 0 22.4 22.4"><polygon points="11.2,0 11.2,6.047999999999999 6.047999999999999,11.2 0,11.2" fill="#a4e6f9"/><polygon points="11.2,0 22.4,11.2 16.352,11.2 11.2,6.047999999999999" fill="#2298d8"/><polygon points="0,11.2 6.047999999999999,11.2 11.2,16.352 11.2,22.4" fill="#1d92d0"/><polygon points="22.4,11.2 11.2,22.4 11.2,16.352 16.352,11.2" fill="#14759f"/><polygon points="11.2,6.047999999999999 16.352,11.2 11.2,16.352 6.047999999999999,11.2" fill="#22b9ee"/></svg>
<div class="t" style="top:288.0px;height:20px;line-height:20px;font-size:16px;color:#101020;left:71.5px;width:163.0px;overflow:hidden;right:auto;"><span style="letter-spacing:0.50px">/tb/lab05/</span><span style="letter-spacing:0.17px">rd1</span></div>
<div class="t" style="top:288.0px;height:20px;line-height:20px;font-size:16px;color:#101020;left:241.5px;right:auto;"><span style="letter-spacing:-0.04px">0</span></div>
<div style="left:35.0px;top:324.0px;width:8.0px;height:2.0px;background:#d4d4d4;"></div>
<svg style="left:20.8px;top:317.2px;" width="15.0" height="15.0" viewBox="0 0 15.0 15.0"><rect x="0" y="0" width="15.0" height="15.0" fill="#8890b8" opacity="0.55"/><rect x="0.6" y="0.4" width="13.0" height="12.8" fill="#fdfdff"/><rect x="3.3" y="6.0" width="7.4" height="2.1" fill="#101010"/><rect x="5.95" y="3.3" width="2.1" height="7.4" fill="#101010"/></svg>
<svg style="left:42.0px;top:312.1px;" width="22.4" height="22.4" viewBox="0 0 22.4 22.4"><polygon points="11.2,0 11.2,6.047999999999999 6.047999999999999,11.2 0,11.2" fill="#a4e6f9"/><polygon points="11.2,0 22.4,11.2 16.352,11.2 11.2,6.047999999999999" fill="#2298d8"/><polygon points="0,11.2 6.047999999999999,11.2 11.2,16.352 11.2,22.4" fill="#1d92d0"/><polygon points="22.4,11.2 11.2,22.4 11.2,16.352 16.352,11.2" fill="#14759f"/><polygon points="11.2,6.047999999999999 16.352,11.2 11.2,16.352 6.047999999999999,11.2" fill="#22b9ee"/></svg>
<div class="t" style="top:313.0px;height:20px;line-height:20px;font-size:16px;color:#f0f0f0;left:71.5px;width:163.0px;overflow:hidden;right:auto;"><span style="letter-spacing:0.50px">/tb/lab05/</span><span style="letter-spacing:0.17px">rd2</span></div>
<div class="t" style="top:313.0px;height:20px;line-height:20px;font-size:16px;color:#f0f0f0;left:241.5px;right:auto;"><span style="letter-spacing:-0.04px">0</span></div>
<svg style="left:42.0px;top:337.2px;" width="22.4" height="22.4" viewBox="0 0 22.4 22.4"><polygon points="11.2,0 11.2,6.047999999999999 6.047999999999999,11.2 0,11.2" fill="#a4e6f9"/><polygon points="11.2,0 22.4,11.2 16.352,11.2 11.2,6.047999999999999" fill="#2298d8"/><polygon points="0,11.2 6.047999999999999,11.2 11.2,16.352 11.2,22.4" fill="#1d92d0"/><polygon points="22.4,11.2 11.2,22.4 11.2,16.352 16.352,11.2" fill="#14759f"/><polygon points="11.2,6.047999999999999 16.352,11.2 11.2,16.352 6.047999999999999,11.2" fill="#22b9ee"/></svg>
<div class="t" style="top:338.0px;height:20px;line-height:20px;font-size:16px;color:#f0f0f0;left:71.5px;width:163.0px;overflow:hidden;right:auto;"><span style="letter-spacing:0.50px">/tb/lab05/</span><span style="letter-spacing:-0.20px">alu_src</span></div>
<div class="t" style="top:338.0px;height:20px;line-height:20px;font-size:16px;color:#f0f0f0;left:241.5px;right:auto;"><span style="letter-spacing:-0.04px">0</span></div>
<svg style="left:42.0px;top:362.2px;" width="22.4" height="22.4" viewBox="0 0 22.4 22.4"><polygon points="11.2,0 11.2,6.047999999999999 6.047999999999999,11.2 0,11.2" fill="#a4e6f9"/><polygon points="11.2,0 22.4,11.2 16.352,11.2 11.2,6.047999999999999" fill="#2298d8"/><polygon points="0,11.2 6.047999999999999,11.2 11.2,16.352 11.2,22.4" fill="#1d92d0"/><polygon points="22.4,11.2 11.2,22.4 11.2,16.352 16.352,11.2" fill="#14759f"/><polygon points="11.2,6.047999999999999 16.352,11.2 11.2,16.352 6.047999999999999,11.2" fill="#22b9ee"/></svg>
<div class="t" style="top:363.0px;height:20px;line-height:20px;font-size:16px;color:#f0f0f0;left:71.5px;width:163.0px;overflow:hidden;right:auto;"><span style="letter-spacing:0.50px">/tb/lab05/</span><span style="letter-spacing:-0.16px">mem_write</span></div>
<div class="t" style="top:363.0px;height:20px;line-height:20px;font-size:16px;color:#f0f0f0;left:241.5px;right:auto;"><span style="letter-spacing:-0.04px">0</span></div>
<svg style="left:42.0px;top:387.3px;" width="22.4" height="22.4" viewBox="0 0 22.4 22.4"><polygon points="11.2,0 11.2,6.047999999999999 6.047999999999999,11.2 0,11.2" fill="#a4e6f9"/><polygon points="11.2,0 22.4,11.2 16.352,11.2 11.2,6.047999999999999" fill="#2298d8"/><polygon points="0,11.2 6.047999999999999,11.2 11.2,16.352 11.2,22.4" fill="#1d92d0"/><polygon points="22.4,11.2 11.2,22.4 11.2,16.352 16.352,11.2" fill="#14759f"/><polygon points="11.2,6.047999999999999 16.352,11.2 11.2,16.352 6.047999999999999,11.2" fill="#22b9ee"/></svg>
<div class="t" style="top:389.0px;height:20px;line-height:20px;font-size:16px;color:#f0f0f0;left:71.5px;width:163.0px;overflow:hidden;right:auto;"><span style="letter-spacing:0.50px">/tb/lab05/</span><span style="letter-spacing:-0.12px">mem_to_reg</span></div>
<div class="t" style="top:389.0px;height:20px;line-height:20px;font-size:16px;color:#f0f0f0;left:241.5px;right:auto;"><span style="letter-spacing:-0.04px">0</span></div>
<svg style="left:42.0px;top:412.4px;" width="22.4" height="22.4" viewBox="0 0 22.4 22.4"><polygon points="11.2,0 11.2,6.047999999999999 6.047999999999999,11.2 0,11.2" fill="#a4e6f9"/><polygon points="11.2,0 22.4,11.2 16.352,11.2 11.2,6.047999999999999" fill="#2298d8"/><polygon points="0,11.2 6.047999999999999,11.2 11.2,16.352 11.2,22.4" fill="#1d92d0"/><polygon points="22.4,11.2 11.2,22.4 11.2,16.352 16.352,11.2" fill="#14759f"/><polygon points="11.2,6.047999999999999 16.352,11.2 11.2,16.352 6.047999999999999,11.2" fill="#22b9ee"/></svg>
<div class="t" style="top:414.0px;height:20px;line-height:20px;font-size:16px;color:#f0f0f0;left:71.5px;width:163.0px;overflow:hidden;right:auto;"><span style="letter-spacing:0.50px">/tb/lab05/</span><span style="letter-spacing:-0.23px">pc_src</span></div>
<div class="t" style="top:414.0px;height:20px;line-height:20px;font-size:16px;color:#f0f0f0;left:241.5px;right:auto;"><span style="letter-spacing:-0.04px">0</span></div>
<svg style="left:42.0px;top:437.5px;" width="22.4" height="22.4" viewBox="0 0 22.4 22.4"><polygon points="11.2,0 11.2,6.047999999999999 6.047999999999999,11.2 0,11.2" fill="#a4e6f9"/><polygon points="11.2,0 22.4,11.2 16.352,11.2 11.2,6.047999999999999" fill="#2298d8"/><polygon points="0,11.2 6.047999999999999,11.2 11.2,16.352 11.2,22.4" fill="#1d92d0"/><polygon points="22.4,11.2 11.2,22.4 11.2,16.352 16.352,11.2" fill="#14759f"/><polygon points="11.2,6.047999999999999 16.352,11.2 11.2,16.352 6.047999999999999,11.2" fill="#22b9ee"/></svg>
<div class="t" style="top:439.0px;height:20px;line-height:20px;font-size:16px;color:#f0f0f0;left:71.5px;width:163.0px;overflow:hidden;right:auto;"><span style="letter-spacing:0.50px">/tb/lab05/</span><span style="letter-spacing:0.23px">regWrite</span></div>
<div class="t" style="top:439.0px;height:20px;line-height:20px;font-size:16px;color:#f0f0f0;left:241.5px;right:auto;"><span style="letter-spacing:-0.04px">0</span></div>
<svg style="left:42.0px;top:462.5px;" width="22.4" height="22.4" viewBox="0 0 22.4 22.4"><polygon points="11.2,0 11.2,6.047999999999999 6.047999999999999,11.2 0,11.2" fill="#a4e6f9"/><polygon points="11.2,0 22.4,11.2 16.352,11.2 11.2,6.047999999999999" fill="#2298d8"/><polygon points="0,11.2 6.047999999999999,11.2 11.2,16.352 11.2,22.4" fill="#1d92d0"/><polygon points="22.4,11.2 11.2,22.4 11.2,16.352 16.352,11.2" fill="#14759f"/><polygon points="11.2,6.047999999999999 16.352,11.2 11.2,16.352 6.047999999999999,11.2" fill="#22b9ee"/></svg>
<div class="t" style="top:464.0px;height:20px;line-height:20px;font-size:16px;color:#f0f0f0;left:71.5px;width:163.0px;overflow:hidden;right:auto;"><span style="letter-spacing:0.50px">/tb/lab05/</span><span style="letter-spacing:0.17px">halt_flag</span></div>
<div class="t" style="top:464.0px;height:20px;line-height:20px;font-size:16px;color:#f0f0f0;left:241.5px;right:auto;"><span style="letter-spacing:-0.04px">0</span></div>
<svg style="left:42.0px;top:487.6px;" width="22.4" height="22.4" viewBox="0 0 22.4 22.4"><polygon points="11.2,0 11.2,6.047999999999999 6.047999999999999,11.2 0,11.2" fill="#a4e6f9"/><polygon points="11.2,0 22.4,11.2 16.352,11.2 11.2,6.047999999999999" fill="#2298d8"/><polygon points="0,11.2 6.047999999999999,11.2 11.2,16.352 11.2,22.4" fill="#1d92d0"/><polygon points="22.4,11.2 11.2,22.4 11.2,16.352 16.352,11.2" fill="#14759f"/><polygon points="11.2,6.047999999999999 16.352,11.2 11.2,16.352 6.047999999999999,11.2" fill="#22b9ee"/></svg>
<div class="t" style="top:489.0px;height:20px;line-height:20px;font-size:16px;color:#f0f0f0;left:71.5px;width:163.0px;overflow:hidden;right:auto;"><span style="letter-spacing:0.50px">/tb/lab05/</span><span style="letter-spacing:0.13px">jal_ctrl</span></div>
<div class="t" style="top:489.0px;height:20px;line-height:20px;font-size:16px;color:#f0f0f0;left:241.5px;right:auto;"><span style="letter-spacing:-0.04px">0</span></div>
<svg style="left:42.0px;top:512.7px;" width="22.4" height="22.4" viewBox="0 0 22.4 22.4"><polygon points="11.2,0 11.2,6.047999999999999 6.047999999999999,11.2 0,11.2" fill="#a4e6f9"/><polygon points="11.2,0 22.4,11.2 16.352,11.2 11.2,6.047999999999999" fill="#2298d8"/><polygon points="0,11.2 6.047999999999999,11.2 11.2,16.352 11.2,22.4" fill="#1d92d0"/><polygon points="22.4,11.2 11.2,22.4 11.2,16.352 16.352,11.2" fill="#14759f"/><polygon points="11.2,6.047999999999999 16.352,11.2 11.2,16.352 6.047999999999999,11.2" fill="#22b9ee"/></svg>
<div class="t" style="top:514.0px;height:20px;line-height:20px;font-size:16px;color:#f0f0f0;left:71.5px;width:163.0px;overflow:hidden;right:auto;"><span style="letter-spacing:0.50px">/tb/lab05/</span><span style="letter-spacing:0.18px">jalr_ctrl</span></div>
<div class="t" style="top:514.0px;height:20px;line-height:20px;font-size:16px;color:#f0f0f0;left:241.5px;right:auto;"><span style="letter-spacing:-0.04px">0</span></div>
<div style="left:35.0px;top:549.7px;width:8.0px;height:2.0px;background:#d4d4d4;"></div>
<svg style="left:20.8px;top:542.9px;" width="15.0" height="15.0" viewBox="0 0 15.0 15.0"><rect x="0" y="0" width="15.0" height="15.0" fill="#8890b8" opacity="0.55"/><rect x="0.6" y="0.4" width="13.0" height="12.8" fill="#fdfdff"/><rect x="3.3" y="6.0" width="7.4" height="2.1" fill="#101010"/><rect x="5.95" y="3.3" width="2.1" height="7.4" fill="#101010"/></svg>
<svg style="left:42.0px;top:537.8px;" width="22.4" height="22.4" viewBox="0 0 22.4 22.4"><polygon points="11.2,0 11.2,6.047999999999999 6.047999999999999,11.2 0,11.2" fill="#a4e6f9"/><polygon points="11.2,0 22.4,11.2 16.352,11.2 11.2,6.047999999999999" fill="#2298d8"/><polygon points="0,11.2 6.047999999999999,11.2 11.2,16.352 11.2,22.4" fill="#1d92d0"/><polygon points="22.4,11.2 11.2,22.4 11.2,16.352 16.352,11.2" fill="#14759f"/><polygon points="11.2,6.047999999999999 16.352,11.2 11.2,16.352 6.047999999999999,11.2" fill="#22b9ee"/></svg>
<div class="t" style="top:539.0px;height:20px;line-height:20px;font-size:16px;color:#f0f0f0;left:71.5px;width:163.0px;overflow:hidden;right:auto;"><span style="letter-spacing:1.09px">/tb/</span><span style="letter-spacing:0.09px">curr_instruction</span></div>
<div class="t" style="top:539.0px;height:20px;line-height:20px;font-size:16px;color:#f0f0f0;left:241.5px;right:auto;"><span style="letter-spacing:-0.62px">z</span></div>
</div>
<div style="left:747.5px;top:80.5px;width:3.5px;height:548.0px;background:#fff;"></div>
<div style="left:513.0px;top:77.5px;width:387.0px;height:3.3px;background:#fff;"></div>
<div class="t" style="top:641.0px;height:20px;line-height:20px;font-size:16px;color:#f0f0f0;right:1170.5px;"><span style="letter-spacing:-0.33px">Now</span></div>
<div class="t" style="top:641.0px;height:20px;line-height:20px;font-size:16px;color:#f0f0f0;right:1019.0px;"><span style="letter-spacing:-0.10px">300000 ns</span></div>
<div style="left:584.5px;top:666.0px;width:163.0px;height:25.0px;background:#fff;"></div>
<div style="left:752.5px;top:666.0px;width:147.0px;height:25.0px;background:#fff;"></div>
<div class="t" style="top:670.0px;height:20px;line-height:20px;font-size:16px;color:#101020;right:1170.5px;"><span style="letter-spacing:-0.10px">Cursor 1</span></div>
<div class="t" style="top:670.0px;height:20px;line-height:20px;font-size:16px;color:#101020;right:1019.0px;"><span style="letter-spacing:-0.09px">7502.129 ns</span></div>
<div style="left:513.0px;top:691.2px;width:387.0px;height:1.7px;background:#b8b8b8;"></div>
<div style="left:513.0px;top:692.8px;width:387.0px;height:2.5px;background:#fff;"></div>
<div style="left:513.0px;top:695.2px;width:387.0px;height:1.6px;background:#8c8c8c;"></div>
<svg style="left:526.0px;top:640.0px;" width="54.0" height="20.0" viewBox="0 0 54.0 20.0"><g transform="translate(-526,-640)"><path d="M527.5 653.3 H541 M529.5 651 L527.3 653.3 L529.5 655.6 M539 651 L541.2 653.3 L539 655.6" stroke="#78a8f0" stroke-width="1.4" fill="none"/><path d="M530 649.5 L533 643 L536 649.5 M531.3 647.3 H534.8" stroke="#e8e8e8" stroke-width="1.3" fill="none"/><path d="M537 643.5 L539.5 648 L541.5 644" stroke="#404040" stroke-width="1.6" fill="none"/><rect x="544.3" y="642.6" width="15" height="11.6" fill="#5a8ad8" stroke="#a8c4f0" stroke-width="1"/><rect x="546" y="645.6" width="11.6" height="1.8" fill="#e4ecff"/><rect x="546" y="649" width="8" height="1.5" fill="#c0d4f8"/><path d="M550 654 L553 657.8 L556 654 Z" fill="#5a8ad8"/><circle cx="570" cy="649.3" r="7.2" fill="#58b858" stroke="#a8e0a8" stroke-width="1"/><path d="M566.2 649.3 H573.8 M570 645.5 V653.1" stroke="#fff" stroke-width="2.2"/></g></svg>
<svg style="left:530.0px;top:668.0px;" width="56.0" height="24.0" viewBox="0 0 56.0 24.0"><g transform="translate(-530,-668)"><path d="M534.5 678 V675.5 Q534.5 671.8 538.5 671.8 Q542 671.8 542.5 675" stroke="#d4d4d4" stroke-width="1.8" fill="none"/><rect x="531.8" y="677.6" width="14.8" height="9.8" fill="#f2c23c" stroke="#c89418" stroke-width="1"/><rect x="537.6" y="680.6" width="3.2" height="3.8" fill="#a87810"/><path d="M551 683.8 L560.5 675" stroke="#5a8ee2" stroke-width="4.2" stroke-linecap="round"/><path d="M558.5 676.5 L563.5 672 M561 669.8 L560 673.5 L563.5 675.5 L566.5 673.5" stroke="#dcdcdc" stroke-width="2" fill="none"/><circle cx="576.1" cy="677.8" r="7.2" fill="#e84848" stroke="#f4a0a0" stroke-width="0.8"/><rect x="572" y="676.5" width="8.2" height="2.7" fill="#fff"/></g></svg>
<div style="left:525.0px;top:696.8px;width:222.5px;height:24.0px;background:#f4f4f4;"></div>
<div style="left:525.0px;top:696.8px;width:24.0px;height:24.0px;background:#f0f0f0;box-shadow:inset -1.5px -1.5px 0 #707070, inset 2px 2px 0 #fff, inset -3px -3px 0 #a8a8a8;"></div>
<svg style="left:533.1px;top:703.1px;" width="6.6" height="10.8" viewBox="0 0 6.6 10.8"><polygon points="6.6,0 6.6,10.8 0,5.4" fill="#000"/></svg>
<div style="left:723.5px;top:696.8px;width:24.0px;height:24.0px;background:#f0f0f0;box-shadow:inset -1.5px -1.5px 0 #707070, inset 2px 2px 0 #fff, inset -3px -3px 0 #a8a8a8;"></div>
<svg style="left:731.6px;top:703.1px;" width="6.6" height="10.8" viewBox="0 0 6.6 10.8"><polygon points="0,0 0,10.8 6.6,5.4" fill="#000"/></svg>
<div style="left:550.7px;top:696.8px;width:126.5px;height:24.0px;background:#f0f0f0;box-shadow:inset -1.5px -1.5px 0 #707070, inset 2px 2px 0 #fff, inset -3px -3px 0 #a8a8a8;"></div>
<div style="left:752.5px;top:696.8px;width:147.0px;height:24.0px;background:#f4f4f4;"></div>
<div style="left:752.5px;top:696.8px;width:23.0px;height:24.0px;background:#f0f0f0;box-shadow:inset -1.5px -1.5px 0 #707070, inset 2px 2px 0 #fff, inset -3px -3px 0 #a8a8a8;"></div>
<svg style="left:760.1px;top:703.1px;" width="6.6" height="10.8" viewBox="0 0 6.6 10.8"><polygon points="6.6,0 6.6,10.8 0,5.4" fill="#a0a0a0"/></svg>
<div style="left:876.5px;top:696.8px;width:23.0px;height:24.0px;background:#f0f0f0;box-shadow:inset -1.5px -1.5px 0 #707070, inset 2px 2px 0 #fff, inset -3px -3px 0 #a8a8a8;"></div>
<svg style="left:884.1px;top:703.1px;" width="6.6" height="10.8" viewBox="0 0 6.6 10.8"><polygon points="0,0 0,10.8 6.6,5.4" fill="#a0a0a0"/></svg>
<div style="left:775.5px;top:696.8px;width:99.0px;height:24.0px;background:#f0f0f0;box-shadow:inset -1.5px -1.5px 0 #707070, inset 2px 2px 0 #fff, inset -3px -3px 0 #a8a8a8;"></div>
<div style="left:513.0px;top:720.8px;width:387.0px;height:2.6px;background:#808080;"></div>
<div style="left:513.0px;top:723.2px;width:387.0px;height:1.2px;background:#e0e0e0;"></div>
<div style="left:899.5px;top:49.5px;width:4.0px;height:672.0px;background:#fff;"></div>
<div style="left:903.5px;top:49.5px;width:951.5px;height:642.0px;background:#000;"></div>
<div style="left:903.5px;top:77.5px;width:951.5px;height:3.5px;background:#fff;"></div>
<div style="left:903.5px;top:628.7px;width:955.5px;height:5.0px;background:#fff;"></div>
<div style="left:903.5px;top:666.0px;width:951.5px;height:1.5px;background:#909090;"></div>
<div style="left:903.5px;top:691.5px;width:955.5px;height:4.5px;background:#fff;"></div>
<div style="left:903.5px;top:696.0px;width:952.5px;height:1.5px;background:#707070;"></div>
<div style="left:1855.0px;top:49.5px;width:4.0px;height:672.0px;background:#fff;"></div>
<div style="left:1859.5px;top:49.5px;width:23.5px;height:27.5px;background:#808080;"></div>
<div style="left:1859.5px;top:633.5px;width:23.5px;height:57.5px;background:#808080;"></div>
<div style="left:1859.5px;top:695.5px;width:23.5px;height:26.0px;background:#808080;"></div>
<div style="left:1883.0px;top:49.5px;width:4.5px;height:675.0px;background:#fff;"></div>
<div style="left:1859.5px;top:81.0px;width:23.0px;height:548.0px;background:#c8c8c8;"></div>
<div style="left:1859.5px;top:81.5px;width:23.0px;height:22.0px;background:#f0f0f0;box-shadow:inset -1.5px -1.5px 0 #707070, inset 2px 2px 0 #fff, inset -3px -3px 0 #a8a8a8;"></div>
<svg style="left:1865.9px;top:89.8px;" width="9.0" height="4.8" viewBox="0 0 9.0 4.8"><polygon points="0,4.8 9.0,4.8 4.5,0" fill="#000"/></svg>
<div style="left:1859.5px;top:153.0px;width:23.0px;height:275.5px;background:#f0f0f0;box-shadow:inset -1.5px -1.5px 0 #707070, inset 2px 2px 0 #fff, inset -3px -3px 0 #a8a8a8;"></div>
<div style="left:1861.0px;top:297.5px;width:19.5px;height:13.5px;background:#fff;"></div>
<div style="left:1859.5px;top:605.5px;width:23.0px;height:19.5px;background:#f0f0f0;box-shadow:inset -1.5px -1.5px 0 #707070, inset 2px 2px 0 #fff, inset -3px -3px 0 #a8a8a8;"></div>
<svg style="left:1865.9px;top:612.6px;" width="9.0" height="4.8" viewBox="0 0 9.0 4.8"><polygon points="0,0 9.0,0 4.5,4.8" fill="#000"/></svg>
<div style="left:904.5px;top:697.5px;width:951.5px;height:22.5px;background:#c8c8c8;"></div>
<div style="left:905.0px;top:699.5px;width:21.0px;height:20.5px;background:#f0f0f0;box-shadow:inset -1.5px -1.5px 0 #707070, inset 2px 2px 0 #fff, inset -3px -3px 0 #a8a8a8;"></div>
<svg style="left:911.6px;top:704.1px;" width="6.6" height="10.8" viewBox="0 0 6.6 10.8"><polygon points="6.6,0 6.6,10.8 0,5.4" fill="#000"/></svg>
<div style="left:1829.5px;top:699.5px;width:20.5px;height:20.5px;background:#f0f0f0;box-shadow:inset -1.5px -1.5px 0 #707070, inset 2px 2px 0 #fff, inset -3px -3px 0 #a8a8a8;"></div>
<svg style="left:1835.9px;top:704.1px;" width="6.6" height="10.8" viewBox="0 0 6.6 10.8"><polygon points="0,0 0,10.8 6.6,5.4" fill="#000"/></svg>
<div style="left:944.5px;top:697.5px;width:14.5px;height:23.0px;background:#f0f0f0;box-shadow:inset -1.5px -1.5px 0 #707070, inset 2px 2px 0 #fff, inset -3px -3px 0 #a8a8a8;"></div>
<div style="left:950.3px;top:699.0px;width:1.6px;height:19.0px;background:#f0c830;"></div>
<div style="left:903.5px;top:720.5px;width:955.5px;height:3.5px;background:#f0f0f0;"></div>
<svg style="left:0;top:0" width="1904" height="732" viewBox="0 0 1904 732" font-family='"Liberation Sans", sans-serif' font-size="16" fill="#ececec"><defs><clipPath id="wc"><rect x="904.8" y="81" width="950.2" height="547.7"/></clipPath><clipPath id="ac"><rect x="903.5" y="634" width="951.5" height="60"/></clipPath></defs><g clip-path="url(#wc)"><rect x="919.85" y="81" width="1.5" height="547.7" fill="#868686"/><rect x="1012.75" y="81" width="1.5" height="547.7" fill="#868686"/><rect x="1105.65" y="81" width="1.5" height="547.7" fill="#868686"/><rect x="1198.55" y="81" width="1.5" height="547.7" fill="#868686"/><rect x="1291.45" y="81" width="1.5" height="547.7" fill="#868686"/><rect x="1384.35" y="81" width="1.5" height="547.7" fill="#868686"/><rect x="1477.25" y="81" width="1.5" height="547.7" fill="#868686"/><rect x="1570.15" y="81" width="1.5" height="547.7" fill="#868686"/><rect x="1663.05" y="81" width="1.5" height="547.7" fill="#868686"/><rect x="1755.95" y="81" width="1.5" height="547.7" fill="#868686"/><rect x="1848.85" y="81" width="1.5" height="547.7" fill="#868686"/><path d="M898.50 68.83 L1064.60 68.83 L1064.60 86.42 L1111.05 86.42 L1111.05 68.83 L1343.30 68.83 L1343.30 86.42 L1389.75 86.42 L1389.75 68.83 L1575.55 68.83 L1575.55 86.42 L1860.00 86.42" fill="none" stroke="#20c820" stroke-width="1.9" stroke-linejoin="round"/><path d="M898.50 111.50 L925.25 111.50 L925.25 93.90 L948.47 93.90 L948.47 111.50 L971.70 111.50 L971.70 93.90 L994.92 93.90 L994.92 111.50 L1018.14 111.50 L1018.14 93.90 L1041.37 93.90 L1041.37 111.50 L1064.60 111.50 L1064.60 93.90 L1087.82 93.90 L1087.82 111.50 L1111.05 111.50 L1111.05 93.90 L1134.27 93.90 L1134.27 111.50 L1157.50 111.50 L1157.50 93.90 L1180.72 93.90 L1180.72 111.50 L1203.95 111.50 L1203.95 93.90 L1227.17 93.90 L1227.17 111.50 L1250.39 111.50 L1250.39 93.90 L1273.62 93.90 L1273.62 111.50 L1296.85 111.50 L1296.85 93.90 L1320.07 93.90 L1320.07 111.50 L1343.30 111.50 L1343.30 93.90 L1366.52 93.90 L1366.52 111.50 L1389.75 111.50 L1389.75 93.90 L1412.97 93.90 L1412.97 111.50 L1436.20 111.50 L1436.20 93.90 L1459.42 93.90 L1459.42 111.50 L1482.64 111.50 L1482.64 93.90 L1505.87 93.90 L1505.87 111.50 L1529.10 111.50 L1529.10 93.90 L1552.32 93.90 L1552.32 111.50 L1575.55 111.50 L1575.55 93.90 L1598.77 93.90 L1598.77 111.50 L1621.99 111.50 L1621.99 93.90 L1645.22 93.90 L1645.22 111.50 L1668.45 111.50 L1668.45 93.90 L1691.67 93.90 L1691.67 111.50 L1714.89 111.50 L1714.89 93.90 L1738.12 93.90 L1738.12 111.50 L1761.35 111.50 L1761.35 93.90 L1784.57 93.90 L1784.57 111.50 L1807.80 111.50 L1807.80 93.90 L1831.02 93.90 L1831.02 111.50 L1854.25 111.50 L1854.25 93.90 L1877.47 93.90 L1877.47 111.50 L1860.00 111.50" fill="none" stroke="#20c820" stroke-width="1.9" stroke-linejoin="round"/><path d="M895.45 118.98 L969.55 118.98 L970.95 121.38 L970.95 134.17 L969.55 136.57 L895.45 136.57 L894.05 134.17 L894.05 121.38 Z" fill="none" stroke="#8ccc8c" stroke-width="1.9" stroke-linejoin="round"/><text x="905.3" y="134.2">0</text><path d="M973.64 118.98 L1016.00 118.98 L1017.39 121.38 L1017.39 134.17 L1016.00 136.57 L973.64 136.57 L972.25 134.17 L972.25 121.38 Z" fill="none" stroke="#8ccc8c" stroke-width="1.9" stroke-linejoin="round"/><text x="974.4" y="134.2">4</text><path d="M1020.09 118.98 L1062.44 118.98 L1063.85 121.38 L1063.85 134.17 L1062.44 136.57 L1020.09 136.57 L1018.69 134.17 L1018.69 121.38 Z" fill="none" stroke="#8ccc8c" stroke-width="1.9" stroke-linejoin="round"/><text x="1020.8" y="134.2">8</text><path d="M1066.55 118.98 L1108.89 118.98 L1110.30 121.38 L1110.30 134.17 L1108.89 136.57 L1066.55 136.57 L1065.14 134.17 L1065.14 121.38 Z" fill="none" stroke="#8ccc8c" stroke-width="1.9" stroke-linejoin="round"/><text x="1067.3" y="134.2">37</text><path d="M1113.00 118.98 L1248.24 118.98 L1249.64 121.38 L1249.64 134.17 L1248.24 136.57 L1113.00 136.57 L1111.60 134.17 L1111.60 121.38 Z" fill="none" stroke="#8ccc8c" stroke-width="1.9" stroke-linejoin="round"/><text x="1113.7" y="134.2">0</text><path d="M1252.35 118.98 L1294.69 118.98 L1296.10 121.38 L1296.10 134.17 L1294.69 136.57 L1252.35 136.57 L1250.94 134.17 L1250.94 121.38 Z" fill="none" stroke="#8ccc8c" stroke-width="1.9" stroke-linejoin="round"/><text x="1253.1" y="134.2">4</text><path d="M1298.80 118.98 L1341.14 118.98 L1342.55 121.38 L1342.55 134.17 L1341.14 136.57 L1298.80 136.57 L1297.39 134.17 L1297.39 121.38 Z" fill="none" stroke="#8ccc8c" stroke-width="1.9" stroke-linejoin="round"/><text x="1299.5" y="134.2">8</text><path d="M1345.25 118.98 L1387.60 118.98 L1389.00 121.38 L1389.00 134.17 L1387.60 136.57 L1345.25 136.57 L1343.85 134.17 L1343.85 121.38 Z" fill="none" stroke="#8ccc8c" stroke-width="1.9" stroke-linejoin="round"/><text x="1346.0" y="134.2">37</text><path d="M1391.70 118.98 L1480.49 118.98 L1481.89 121.38 L1481.89 134.17 L1480.49 136.57 L1391.70 136.57 L1390.30 134.17 L1390.30 121.38 Z" fill="none" stroke="#8ccc8c" stroke-width="1.9" stroke-linejoin="round"/><text x="1392.4" y="134.2">0</text><path d="M1484.60 118.98 L1526.94 118.98 L1528.35 121.38 L1528.35 134.17 L1526.94 136.57 L1484.60 136.57 L1483.19 134.17 L1483.19 121.38 Z" fill="none" stroke="#8ccc8c" stroke-width="1.9" stroke-linejoin="round"/><text x="1485.3" y="134.2">16</text><path d="M1531.05 118.98 L1573.39 118.98 L1574.80 121.38 L1574.80 134.17 L1573.39 136.57 L1531.05 136.57 L1529.64 134.17 L1529.64 121.38 Z" fill="none" stroke="#8ccc8c" stroke-width="1.9" stroke-linejoin="round"/><text x="1531.8" y="134.2">0</text><path d="M1577.50 118.98 L1862.85 118.98 L1864.25 121.38 L1864.25 134.17 L1862.85 136.57 L1577.50 136.57 L1576.10 134.17 L1576.10 121.38 Z" fill="none" stroke="#8ccc8c" stroke-width="1.9" stroke-linejoin="round"/><text x="1578.2" y="134.2">-1</text><path d="M895.45 144.05 L923.10 144.05 L924.50 146.45 L924.50 159.25 L923.10 161.65 L895.45 161.65 L894.05 159.25 L894.05 146.45 Z" fill="none" stroke="#8ccc8c" stroke-width="1.9" stroke-linejoin="round"/><path d="M927.19 144.05 L969.55 144.05 L970.95 146.45 L970.95 159.25 L969.55 161.65 L927.19 161.65 L925.79 159.25 L925.79 146.45 Z" fill="none" stroke="#8ccc8c" stroke-width="1.9" stroke-linejoin="round"/><text x="927.9" y="159.2">15</text><path d="M973.64 144.05 L1016.00 144.05 L1017.39 146.45 L1017.39 159.25 L1016.00 161.65 L973.64 161.65 L972.25 159.25 L972.25 146.45 Z" fill="none" stroke="#8ccc8c" stroke-width="1.9" stroke-linejoin="round"/><text x="974.4" y="159.2">16</text><path d="M1020.09 144.05 L1062.44 144.05 L1063.85 146.45 L1063.85 159.25 L1062.44 161.65 L1020.09 161.65 L1018.69 159.25 L1018.69 146.45 Z" fill="none" stroke="#8ccc8c" stroke-width="1.9" stroke-linejoin="round"/><text x="1020.8" y="159.2">17</text><path d="M1066.55 144.05 L1108.89 144.05 L1110.30 146.45 L1110.30 159.25 L1108.89 161.65 L1066.55 161.65 L1065.14 159.25 L1065.14 146.45 Z" fill="none" stroke="#8ccc8c" stroke-width="1.9" stroke-linejoin="round"/><text x="1067.3" y="159.2">18</text><path d="M1113.00 144.05 L1155.35 144.05 L1156.75 146.45 L1156.75 159.25 L1155.35 161.65 L1113.00 161.65 L1111.60 159.25 L1111.60 146.45 Z" fill="none" stroke="#8ccc8c" stroke-width="1.9" stroke-linejoin="round"/><text x="1113.7" y="159.2">19</text><path d="M1159.45 144.05 L1201.80 144.05 L1203.20 146.45 L1203.20 159.25 L1201.80 161.65 L1159.45 161.65 L1158.05 159.25 L1158.05 146.45 Z" fill="none" stroke="#8ccc8c" stroke-width="1.9" stroke-linejoin="round"/><text x="1160.2" y="159.2">14</text><path d="M1205.90 144.05 L1248.24 144.05 L1249.64 146.45 L1249.64 159.25 L1248.24 161.65 L1205.90 161.65 L1204.50 159.25 L1204.50 146.45 Z" fill="none" stroke="#8ccc8c" stroke-width="1.9" stroke-linejoin="round"/><text x="1206.6" y="159.2">15</text><path d="M1252.35 144.05 L1294.69 144.05 L1296.10 146.45 L1296.10 159.25 L1294.69 161.65 L1252.35 161.65 L1250.94 159.25 L1250.94 146.45 Z" fill="none" stroke="#8ccc8c" stroke-width="1.9" stroke-linejoin="round"/><text x="1253.1" y="159.2">16</text><path d="M1298.80 144.05 L1341.14 144.05 L1342.55 146.45 L1342.55 159.25 L1341.14 161.65 L1298.80 161.65 L1297.39 159.25 L1297.39 146.45 Z" fill="none" stroke="#8ccc8c" stroke-width="1.9" stroke-linejoin="round"/><text x="1299.5" y="159.2">17</text><path d="M1345.25 144.05 L1387.60 144.05 L1389.00 146.45 L1389.00 159.25 L1387.60 161.65 L1345.25 161.65 L1343.85 159.25 L1343.85 146.45 Z" fill="none" stroke="#8ccc8c" stroke-width="1.9" stroke-linejoin="round"/><text x="1346.0" y="159.2">18</text><path d="M1391.70 144.05 L1434.05 144.05 L1435.45 146.45 L1435.45 159.25 L1434.05 161.65 L1391.70 161.65 L1390.30 159.25 L1390.30 146.45 Z" fill="none" stroke="#8ccc8c" stroke-width="1.9" stroke-linejoin="round"/><text x="1392.4" y="159.2">19</text><path d="M1438.15 144.05 L1480.49 144.05 L1481.89 146.45 L1481.89 159.25 L1480.49 161.65 L1438.15 161.65 L1436.75 159.25 L1436.75 146.45 Z" fill="none" stroke="#8ccc8c" stroke-width="1.9" stroke-linejoin="round"/><text x="1438.9" y="159.2">3</text><path d="M1484.60 144.05 L1526.94 144.05 L1528.35 146.45 L1528.35 159.25 L1526.94 161.65 L1484.60 161.65 L1483.19 159.25 L1483.19 146.45 Z" fill="none" stroke="#8ccc8c" stroke-width="1.9" stroke-linejoin="round"/><text x="1485.3" y="159.2">4</text><path d="M1531.05 144.05 L1573.39 144.05 L1574.80 146.45 L1574.80 159.25 L1573.39 161.65 L1531.05 161.65 L1529.64 159.25 L1529.64 146.45 Z" fill="none" stroke="#8ccc8c" stroke-width="1.9" stroke-linejoin="round"/><text x="1531.8" y="159.2">20</text><path d="M1577.50 144.05 L1862.85 144.05 L1864.25 146.45 L1864.25 159.25 L1862.85 161.65 L1577.50 161.65 L1576.10 159.25 L1576.10 146.45 Z" fill="none" stroke="#8ccc8c" stroke-width="1.9" stroke-linejoin="round"/><text x="1578.2" y="159.2">21</text><path d="M895.45 169.12 L923.10 169.12 L924.50 171.53 L924.50 184.32 L923.10 186.72 L895.45 186.72 L894.05 184.32 L894.05 171.53 Z" fill="none" stroke="#8ccc8c" stroke-width="1.9" stroke-linejoin="round"/><path d="M927.19 169.12 L969.55 169.12 L970.95 171.53 L970.95 184.32 L969.55 186.72 L927.19 186.72 L925.79 184.32 L925.79 171.53 Z" fill="none" stroke="#8ccc8c" stroke-width="1.9" stroke-linejoin="round"/><text x="927.9" y="184.3">16</text><path d="M973.64 169.12 L1016.00 169.12 L1017.39 171.53 L1017.39 184.32 L1016.00 186.72 L973.64 186.72 L972.25 184.32 L972.25 171.53 Z" fill="none" stroke="#8ccc8c" stroke-width="1.9" stroke-linejoin="round"/><text x="974.4" y="184.3">17</text><path d="M1020.09 169.12 L1062.44 169.12 L1063.85 171.53 L1063.85 184.32 L1062.44 186.72 L1020.09 186.72 L1018.69 184.32 L1018.69 171.53 Z" fill="none" stroke="#8ccc8c" stroke-width="1.9" stroke-linejoin="round"/><text x="1020.8" y="184.3">18</text><path d="M1066.55 169.12 L1108.89 169.12 L1110.30 171.53 L1110.30 184.32 L1108.89 186.72 L1066.55 186.72 L1065.14 184.32 L1065.14 171.53 Z" fill="none" stroke="#8ccc8c" stroke-width="1.9" stroke-linejoin="round"/><text x="1067.3" y="184.3">19</text><path d="M1113.00 169.12 L1155.35 169.12 L1156.75 171.53 L1156.75 184.32 L1155.35 186.72 L1113.00 186.72 L1111.60 184.32 L1111.60 171.53 Z" fill="none" stroke="#8ccc8c" stroke-width="1.9" stroke-linejoin="round"/><text x="1113.7" y="184.3">14</text><path d="M1159.45 169.12 L1201.80 169.12 L1203.20 171.53 L1203.20 184.32 L1201.80 186.72 L1159.45 186.72 L1158.05 184.32 L1158.05 171.53 Z" fill="none" stroke="#8ccc8c" stroke-width="1.9" stroke-linejoin="round"/><text x="1160.2" y="184.3">15</text><path d="M1205.90 169.12 L1248.24 169.12 L1249.64 171.53 L1249.64 184.32 L1248.24 186.72 L1205.90 186.72 L1204.50 184.32 L1204.50 171.53 Z" fill="none" stroke="#8ccc8c" stroke-width="1.9" stroke-linejoin="round"/><text x="1206.6" y="184.3">16</text><path d="M1252.35 169.12 L1294.69 169.12 L1296.10 171.53 L1296.10 184.32 L1294.69 186.72 L1252.35 186.72 L1250.94 184.32 L1250.94 171.53 Z" fill="none" stroke="#8ccc8c" stroke-width="1.9" stroke-linejoin="round"/><text x="1253.1" y="184.3">17</text><path d="M1298.80 169.12 L1341.14 169.12 L1342.55 171.53 L1342.55 184.32 L1341.14 186.72 L1298.80 186.72 L1297.39 184.32 L1297.39 171.53 Z" fill="none" stroke="#8ccc8c" stroke-width="1.9" stroke-linejoin="round"/><text x="1299.5" y="184.3">18</text><path d="M1345.25 169.12 L1387.60 169.12 L1389.00 171.53 L1389.00 184.32 L1387.60 186.72 L1345.25 186.72 L1343.85 184.32 L1343.85 171.53 Z" fill="none" stroke="#8ccc8c" stroke-width="1.9" stroke-linejoin="round"/><text x="1346.0" y="184.3">19</text><path d="M1391.70 169.12 L1434.05 169.12 L1435.45 171.53 L1435.45 184.32 L1434.05 186.72 L1391.70 186.72 L1390.30 184.32 L1390.30 171.53 Z" fill="none" stroke="#8ccc8c" stroke-width="1.9" stroke-linejoin="round"/><text x="1392.4" y="184.3">3</text><path d="M1438.15 169.12 L1480.49 169.12 L1481.89 171.53 L1481.89 184.32 L1480.49 186.72 L1438.15 186.72 L1436.75 184.32 L1436.75 171.53 Z" fill="none" stroke="#8ccc8c" stroke-width="1.9" stroke-linejoin="round"/><text x="1438.9" y="184.3">4</text><path d="M1484.60 169.12 L1526.94 169.12 L1528.35 171.53 L1528.35 184.32 L1526.94 186.72 L1484.60 186.72 L1483.19 184.32 L1483.19 171.53 Z" fill="none" stroke="#8ccc8c" stroke-width="1.9" stroke-linejoin="round"/><text x="1485.3" y="184.3">20</text><path d="M1531.05 169.12 L1573.39 169.12 L1574.80 171.53 L1574.80 184.32 L1573.39 186.72 L1531.05 186.72 L1529.64 184.32 L1529.64 171.53 Z" fill="none" stroke="#8ccc8c" stroke-width="1.9" stroke-linejoin="round"/><text x="1531.8" y="184.3">21</text><path d="M1577.50 169.12 L1862.85 169.12 L1864.25 171.53 L1864.25 184.32 L1862.85 186.72 L1577.50 186.72 L1576.10 184.32 L1576.10 171.53 Z" fill="none" stroke="#8ccc8c" stroke-width="1.9" stroke-linejoin="round"/><text x="1578.2" y="184.3">21</text><path d="M895.45 194.20 L923.10 194.20 L924.50 196.60 L924.50 209.40 L923.10 211.80 L895.45 211.80 L894.05 209.40 L894.05 196.60 Z" fill="none" stroke="#8ccc8c" stroke-width="1.9" stroke-linejoin="round"/><path d="M927.19 194.20 L969.55 194.20 L970.95 196.60 L970.95 209.40 L969.55 211.80 L927.19 211.80 L925.79 209.40 L925.79 196.60 Z" fill="none" stroke="#8ccc8c" stroke-width="1.9" stroke-linejoin="round"/><text x="927.9" y="209.4" letter-spacing="0.6">00...</text><path d="M973.64 194.20 L1016.00 194.20 L1017.39 196.60 L1017.39 209.40 L1016.00 211.80 L973.64 211.80 L972.25 209.40 L972.25 196.60 Z" fill="none" stroke="#8ccc8c" stroke-width="1.9" stroke-linejoin="round"/><text x="974.4" y="209.4" letter-spacing="0.6">00...</text><path d="M1020.09 194.20 L1062.44 194.20 L1063.85 196.60 L1063.85 209.40 L1062.44 211.80 L1020.09 211.80 L1018.69 209.40 L1018.69 196.60 Z" fill="none" stroke="#8ccc8c" stroke-width="1.9" stroke-linejoin="round"/><text x="1020.8" y="209.4" letter-spacing="0.6">00...</text><path d="M1066.55 194.20 L1108.89 194.20 L1110.30 196.60 L1110.30 209.40 L1108.89 211.80 L1066.55 211.80 L1065.14 209.40 L1065.14 196.60 Z" fill="none" stroke="#8ccc8c" stroke-width="1.9" stroke-linejoin="round"/><text x="1067.3" y="209.4" letter-spacing="0.6">02...</text><path d="M1113.00 194.20 L1155.35 194.20 L1156.75 196.60 L1156.75 209.40 L1155.35 211.80 L1113.00 211.80 L1111.60 209.40 L1111.60 196.60 Z" fill="none" stroke="#8ccc8c" stroke-width="1.9" stroke-linejoin="round"/><text x="1113.7" y="209.4" letter-spacing="0.6">00...</text><path d="M1159.45 194.20 L1201.80 194.20 L1203.20 196.60 L1203.20 209.40 L1201.80 211.80 L1159.45 211.80 L1158.05 209.40 L1158.05 196.60 Z" fill="none" stroke="#8ccc8c" stroke-width="1.9" stroke-linejoin="round"/><text x="1160.2" y="209.4" letter-spacing="0.6">00...</text><path d="M1205.90 194.20 L1248.24 194.20 L1249.64 196.60 L1249.64 209.40 L1248.24 211.80 L1205.90 211.80 L1204.50 209.40 L1204.50 196.60 Z" fill="none" stroke="#8ccc8c" stroke-width="1.9" stroke-linejoin="round"/><text x="1206.6" y="209.4" letter-spacing="0.6">00...</text><path d="M1252.35 194.20 L1294.69 194.20 L1296.10 196.60 L1296.10 209.40 L1294.69 211.80 L1252.35 211.80 L1250.94 209.40 L1250.94 196.60 Z" fill="none" stroke="#8ccc8c" stroke-width="1.9" stroke-linejoin="round"/><text x="1253.1" y="209.4" letter-spacing="0.6">00...</text><path d="M1298.80 194.20 L1341.14 194.20 L1342.55 196.60 L1342.55 209.40 L1341.14 211.80 L1298.80 211.80 L1297.39 209.40 L1297.39 196.60 Z" fill="none" stroke="#8ccc8c" stroke-width="1.9" stroke-linejoin="round"/><text x="1299.5" y="209.4" letter-spacing="0.6">00...</text><path d="M1345.25 194.20 L1387.60 194.20 L1389.00 196.60 L1389.00 209.40 L1387.60 211.80 L1345.25 211.80 L1343.85 209.40 L1343.85 196.60 Z" fill="none" stroke="#8ccc8c" stroke-width="1.9" stroke-linejoin="round"/><text x="1346.0" y="209.4" letter-spacing="0.6">02...</text><path d="M1391.70 194.20 L1434.05 194.20 L1435.45 196.60 L1435.45 209.40 L1434.05 211.80 L1391.70 211.80 L1390.30 209.40 L1390.30 196.60 Z" fill="none" stroke="#8ccc8c" stroke-width="1.9" stroke-linejoin="round"/><text x="1392.4" y="209.4" letter-spacing="0.6">00...</text><path d="M1438.15 194.20 L1480.49 194.20 L1481.89 196.60 L1481.89 209.40 L1480.49 211.80 L1438.15 211.80 L1436.75 209.40 L1436.75 196.60 Z" fill="none" stroke="#8ccc8c" stroke-width="1.9" stroke-linejoin="round"/><text x="1438.9" y="209.4" letter-spacing="0.6">00...</text><path d="M1484.60 194.20 L1526.94 194.20 L1528.35 196.60 L1528.35 209.40 L1526.94 211.80 L1484.60 211.80 L1483.19 209.40 L1483.19 196.60 Z" fill="none" stroke="#8ccc8c" stroke-width="1.9" stroke-linejoin="round"/><text x="1485.3" y="209.4" letter-spacing="0.6">04...</text><path d="M1531.05 194.20 L1573.39 194.20 L1574.80 196.60 L1574.80 209.40 L1573.39 211.80 L1531.05 211.80 L1529.64 209.40 L1529.64 196.60 Z" fill="none" stroke="#8ccc8c" stroke-width="1.9" stroke-linejoin="round"/><text x="1531.8" y="209.4" letter-spacing="0.6">00...</text><path d="M1577.50 194.20 L1862.85 194.20 L1864.25 196.60 L1864.25 209.40 L1862.85 211.80 L1577.50 211.80 L1576.10 209.40 L1576.10 196.60 Z" fill="none" stroke="#8ccc8c" stroke-width="1.9" stroke-linejoin="round"/><text x="1578.2" y="209.4" letter-spacing="1.75">ffffffff</text><path d="M895.45 219.28 L969.55 219.28 L970.95 221.68 L970.95 234.47 L969.55 236.88 L895.45 236.88 L894.05 234.47 L894.05 221.68 Z" fill="none" stroke="#8ccc8c" stroke-width="1.9" stroke-linejoin="round"/><text x="905.3" y="234.5">0</text><path d="M973.64 219.28 L1016.00 219.28 L1017.39 221.68 L1017.39 234.47 L1016.00 236.88 L973.64 236.88 L972.25 234.47 L972.25 221.68 Z" fill="none" stroke="#8ccc8c" stroke-width="1.9" stroke-linejoin="round"/><text x="974.4" y="234.5">4</text><path d="M1020.09 219.28 L1062.44 219.28 L1063.85 221.68 L1063.85 234.47 L1062.44 236.88 L1020.09 236.88 L1018.69 234.47 L1018.69 221.68 Z" fill="none" stroke="#8ccc8c" stroke-width="1.9" stroke-linejoin="round"/><text x="1020.8" y="234.5">8</text><path d="M1066.55 219.28 L1108.89 219.28 L1110.30 221.68 L1110.30 234.47 L1108.89 236.88 L1066.55 236.88 L1065.14 234.47 L1065.14 221.68 Z" fill="none" stroke="#8ccc8c" stroke-width="1.9" stroke-linejoin="round"/><text x="1067.3" y="234.5">24</text><path d="M1113.00 219.28 L1248.24 219.28 L1249.64 221.68 L1249.64 234.47 L1248.24 236.88 L1113.00 236.88 L1111.60 234.47 L1111.60 221.68 Z" fill="none" stroke="#8ccc8c" stroke-width="1.9" stroke-linejoin="round"/><text x="1113.7" y="234.5">0</text><path d="M1252.35 219.28 L1294.69 219.28 L1296.10 221.68 L1296.10 234.47 L1294.69 236.88 L1252.35 236.88 L1250.94 234.47 L1250.94 221.68 Z" fill="none" stroke="#8ccc8c" stroke-width="1.9" stroke-linejoin="round"/><text x="1253.1" y="234.5">4</text><path d="M1298.80 219.28 L1341.14 219.28 L1342.55 221.68 L1342.55 234.47 L1341.14 236.88 L1298.80 236.88 L1297.39 234.47 L1297.39 221.68 Z" fill="none" stroke="#8ccc8c" stroke-width="1.9" stroke-linejoin="round"/><text x="1299.5" y="234.5">8</text><path d="M1345.25 219.28 L1387.60 219.28 L1389.00 221.68 L1389.00 234.47 L1387.60 236.88 L1345.25 236.88 L1343.85 234.47 L1343.85 221.68 Z" fill="none" stroke="#8ccc8c" stroke-width="1.9" stroke-linejoin="round"/><text x="1346.0" y="234.5">120</text><path d="M1391.70 219.28 L1480.49 219.28 L1481.89 221.68 L1481.89 234.47 L1480.49 236.88 L1391.70 236.88 L1390.30 234.47 L1390.30 221.68 Z" fill="none" stroke="#8ccc8c" stroke-width="1.9" stroke-linejoin="round"/><text x="1392.4" y="234.5">0</text><path d="M1484.60 219.28 L1526.94 219.28 L1528.35 221.68 L1528.35 234.47 L1526.94 236.88 L1484.60 236.88 L1483.19 234.47 L1483.19 221.68 Z" fill="none" stroke="#8ccc8c" stroke-width="1.9" stroke-linejoin="round"/><text x="1485.3" y="234.5">16</text><path d="M1531.05 219.28 L1573.39 219.28 L1574.80 221.68 L1574.80 234.47 L1573.39 236.88 L1531.05 236.88 L1529.64 234.47 L1529.64 221.68 Z" fill="none" stroke="#8ccc8c" stroke-width="1.9" stroke-linejoin="round"/><text x="1531.8" y="234.5">0</text><path d="M1577.50 219.28 L1862.85 219.28 L1864.25 221.68 L1864.25 234.47 L1862.85 236.88 L1577.50 236.88 L1576.10 234.47 L1576.10 221.68 Z" fill="none" stroke="#8ccc8c" stroke-width="1.9" stroke-linejoin="round"/><text x="1578.2" y="234.5">0</text><path d="M895.45 244.35 L923.10 244.35 L924.50 246.75 L924.50 259.55 L923.10 261.95 L895.45 261.95 L894.05 259.55 L894.05 246.75 Z" fill="none" stroke="#8ccc8c" stroke-width="1.9" stroke-linejoin="round"/><path d="M927.19 244.35 L969.55 244.35 L970.95 246.75 L970.95 259.55 L969.55 261.95 L927.19 261.95 L925.79 259.55 L925.79 246.75 Z" fill="none" stroke="#8ccc8c" stroke-width="1.9" stroke-linejoin="round"/><text x="927.9" y="259.6">2031</text><path d="M973.64 244.35 L1016.00 244.35 L1017.39 246.75 L1017.39 259.55 L1016.00 261.95 L973.64 261.95 L972.25 259.55 L972.25 246.75 Z" fill="none" stroke="#8ccc8c" stroke-width="1.9" stroke-linejoin="round"/><text x="974.4" y="259.6">2035</text><path d="M1020.09 244.35 L1062.44 244.35 L1063.85 246.75 L1063.85 259.55 L1062.44 261.95 L1020.09 261.95 L1018.69 259.55 L1018.69 246.75 Z" fill="none" stroke="#8ccc8c" stroke-width="1.9" stroke-linejoin="round"/><text x="1020.8" y="259.6">2039</text><path d="M1066.55 244.35 L1108.89 244.35 L1110.30 246.75 L1110.30 259.55 L1108.89 261.95 L1066.55 261.95 L1065.14 259.55 L1065.14 246.75 Z" fill="none" stroke="#8ccc8c" stroke-width="1.9" stroke-linejoin="round"/><text x="1067.3" y="259.6">120</text><path d="M1113.00 244.35 L1155.35 244.35 L1156.75 246.75 L1156.75 259.55 L1155.35 261.95 L1113.00 261.95 L1111.60 259.55 L1111.60 246.75 Z" fill="none" stroke="#8ccc8c" stroke-width="1.9" stroke-linejoin="round"/><text x="1113.7" y="259.6">14</text><path d="M1159.45 244.35 L1201.80 244.35 L1203.20 246.75 L1203.20 259.55 L1201.80 261.95 L1159.45 261.95 L1158.05 259.55 L1158.05 246.75 Z" fill="none" stroke="#8ccc8c" stroke-width="1.9" stroke-linejoin="round"/><text x="1160.2" y="259.6">120</text><path d="M1205.90 244.35 L1248.24 244.35 L1249.64 246.75 L1249.64 259.55 L1248.24 261.95 L1205.90 261.95 L1204.50 259.55 L1204.50 246.75 Z" fill="none" stroke="#8ccc8c" stroke-width="1.9" stroke-linejoin="round"/><text x="1206.6" y="259.6">2039</text><path d="M1252.35 244.35 L1294.69 244.35 L1296.10 246.75 L1296.10 259.55 L1294.69 261.95 L1252.35 261.95 L1250.94 259.55 L1250.94 246.75 Z" fill="none" stroke="#8ccc8c" stroke-width="1.9" stroke-linejoin="round"/><text x="1253.1" y="259.6">2043</text><path d="M1298.80 244.35 L1341.14 244.35 L1342.55 246.75 L1342.55 259.55 L1341.14 261.95 L1298.80 261.95 L1297.39 259.55 L1297.39 246.75 Z" fill="none" stroke="#8ccc8c" stroke-width="1.9" stroke-linejoin="round"/><text x="1299.5" y="259.6">2047</text><path d="M1345.25 244.35 L1387.60 244.35 L1389.00 246.75 L1389.00 259.55 L1387.60 261.95 L1345.25 261.95 L1343.85 259.55 L1343.85 246.75 Z" fill="none" stroke="#8ccc8c" stroke-width="1.9" stroke-linejoin="round"/><text x="1346.0" y="259.6">720</text><path d="M1391.70 244.35 L1434.05 244.35 L1435.45 246.75 L1435.45 259.55 L1434.05 261.95 L1391.70 261.95 L1390.30 259.55 L1390.30 246.75 Z" fill="none" stroke="#8ccc8c" stroke-width="1.9" stroke-linejoin="round"/><text x="1392.4" y="259.6">3</text><path d="M1438.15 244.35 L1480.49 244.35 L1481.89 246.75 L1481.89 259.55 L1480.49 261.95 L1438.15 261.95 L1436.75 259.55 L1436.75 246.75 Z" fill="none" stroke="#8ccc8c" stroke-width="1.9" stroke-linejoin="round"/><text x="1438.9" y="259.6">0</text><path d="M1484.60 244.35 L1526.94 244.35 L1528.35 246.75 L1528.35 259.55 L1526.94 261.95 L1484.60 261.95 L1483.19 259.55 L1483.19 246.75 Z" fill="none" stroke="#8ccc8c" stroke-width="1.9" stroke-linejoin="round"/><text x="1485.3" y="259.6">16</text><path d="M1531.05 244.35 L1573.39 244.35 L1574.80 246.75 L1574.80 259.55 L1573.39 261.95 L1531.05 261.95 L1529.64 259.55 L1529.64 246.75 Z" fill="none" stroke="#8ccc8c" stroke-width="1.9" stroke-linejoin="round"/><text x="1531.8" y="259.6">720</text><path d="M1577.50 244.35 L1862.85 244.35 L1864.25 246.75 L1864.25 259.55 L1862.85 261.95 L1577.50 261.95 L1576.10 259.55 L1576.10 246.75 Z" fill="none" stroke="#8ccc8c" stroke-width="1.9" stroke-linejoin="round"/><text x="1578.2" y="259.6">0</text><path d="M898.50 287.02 L1860.00 287.02" fill="none" stroke="#20c820" stroke-width="1.9" stroke-linejoin="round"/><path d="M895.45 294.50 L1062.44 294.50 L1063.85 296.90 L1063.85 309.70 L1062.44 312.10 L895.45 312.10 L894.05 309.70 L894.05 296.90 Z" fill="none" stroke="#8ccc8c" stroke-width="1.9" stroke-linejoin="round"/><text x="905.3" y="309.7">0</text><path d="M1066.55 294.50 L1108.89 294.50 L1110.30 296.90 L1110.30 309.70 L1108.89 312.10 L1066.55 312.10 L1065.14 309.70 L1065.14 296.90 Z" fill="none" stroke="#8ccc8c" stroke-width="1.9" stroke-linejoin="round"/><text x="1067.3" y="309.7">-1</text><path d="M1113.00 294.50 L1341.14 294.50 L1342.55 296.90 L1342.55 309.70 L1341.14 312.10 L1113.00 312.10 L1111.60 309.70 L1111.60 296.90 Z" fill="none" stroke="#8ccc8c" stroke-width="1.9" stroke-linejoin="round"/><text x="1113.7" y="309.7">0</text><path d="M1345.25 294.50 L1387.60 294.50 L1389.00 296.90 L1389.00 309.70 L1387.60 312.10 L1345.25 312.10 L1343.85 309.70 L1343.85 296.90 Z" fill="none" stroke="#8ccc8c" stroke-width="1.9" stroke-linejoin="round"/><text x="1346.0" y="309.7">-1</text><path d="M1391.70 294.50 L1573.39 294.50 L1574.80 296.90 L1574.80 309.70 L1573.39 312.10 L1391.70 312.10 L1390.30 309.70 L1390.30 296.90 Z" fill="none" stroke="#8ccc8c" stroke-width="1.9" stroke-linejoin="round"/><text x="1392.4" y="309.7">0</text><path d="M1577.50 294.50 L1862.85 294.50 L1864.25 296.90 L1864.25 309.70 L1862.85 312.10 L1577.50 312.10 L1576.10 309.70 L1576.10 296.90 Z" fill="none" stroke="#8ccc8c" stroke-width="1.9" stroke-linejoin="round"/><text x="1578.2" y="309.7">1</text><path d="M895.45 319.57 L946.32 319.57 L947.72 321.97 L947.72 334.77 L946.32 337.17 L895.45 337.17 L894.05 334.77 L894.05 321.97 Z" fill="none" stroke="#8ccc8c" stroke-width="1.9" stroke-linejoin="round"/><text x="905.3" y="334.8">0</text><path d="M950.42 319.57 L992.77 319.57 L994.17 321.97 L994.17 334.77 L992.77 337.17 L950.42 337.17 L949.02 334.77 L949.02 321.97 Z" fill="none" stroke="#8ccc8c" stroke-width="1.9" stroke-linejoin="round"/><text x="951.2" y="334.8">5</text><path d="M996.87 319.57 L1039.22 319.57 L1040.62 321.97 L1040.62 334.77 L1039.22 337.17 L996.87 337.17 L995.47 334.77 L995.47 321.97 Z" fill="none" stroke="#8ccc8c" stroke-width="1.9" stroke-linejoin="round"/><text x="997.6" y="334.8">14</text><path d="M1043.32 319.57 L1085.67 319.57 L1087.07 321.97 L1087.07 334.77 L1085.67 337.17 L1043.32 337.17 L1041.92 334.77 L1041.92 321.97 Z" fill="none" stroke="#8ccc8c" stroke-width="1.9" stroke-linejoin="round"/><text x="1044.1" y="334.8">6</text><path d="M1089.77 319.57 L1225.02 319.57 L1226.42 321.97 L1226.42 334.77 L1225.02 337.17 L1089.77 337.17 L1088.37 334.77 L1088.37 321.97 Z" fill="none" stroke="#8ccc8c" stroke-width="1.9" stroke-linejoin="round"/><text x="1090.5" y="334.8">0</text><path d="M1229.12 319.57 L1271.47 319.57 L1272.87 321.97 L1272.87 334.77 L1271.47 337.17 L1229.12 337.17 L1227.72 334.77 L1227.72 321.97 Z" fill="none" stroke="#8ccc8c" stroke-width="1.9" stroke-linejoin="round"/><text x="1229.9" y="334.8">6</text><path d="M1275.57 319.57 L1317.92 319.57 L1319.32 321.97 L1319.32 334.77 L1317.92 337.17 L1275.57 337.17 L1274.17 334.77 L1274.17 321.97 Z" fill="none" stroke="#8ccc8c" stroke-width="1.9" stroke-linejoin="round"/><text x="1276.3" y="334.8">3</text><path d="M1322.02 319.57 L1457.27 319.57 L1458.67 321.97 L1458.67 334.77 L1457.27 337.17 L1322.02 337.17 L1320.62 334.77 L1320.62 321.97 Z" fill="none" stroke="#8ccc8c" stroke-width="1.9" stroke-linejoin="round"/><text x="1322.8" y="334.8">0</text><path d="M1461.37 319.57 L1503.72 319.57 L1505.12 321.97 L1505.12 334.77 L1503.72 337.17 L1461.37 337.17 L1459.97 334.77 L1459.97 321.97 Z" fill="none" stroke="#8ccc8c" stroke-width="1.9" stroke-linejoin="round"/><text x="1462.1" y="334.8">720</text><path d="M1507.82 319.57 L1596.62 319.57 L1598.02 321.97 L1598.02 334.77 L1596.62 337.17 L1507.82 337.17 L1506.42 334.77 L1506.42 321.97 Z" fill="none" stroke="#8ccc8c" stroke-width="1.9" stroke-linejoin="round"/><text x="1508.6" y="334.8">0</text><path d="M1600.72 319.57 L1862.85 319.57 L1864.25 321.97 L1864.25 334.77 L1862.85 337.17 L1600.72 337.17 L1599.32 334.77 L1599.32 321.97 Z" fill="none" stroke="#8ccc8c" stroke-width="1.9" stroke-linejoin="round"/><text x="1601.5" y="334.8">720</text><path d="M895.45 344.65 L923.10 344.65 L924.50 347.05 L924.50 359.85 L923.10 362.25 L895.45 362.25 L894.05 359.85 L894.05 347.05 Z" fill="none" stroke="#8ccc8c" stroke-width="1.9" stroke-linejoin="round"/><path d="M927.19 344.65 L946.32 344.65 L947.72 347.05 L947.72 359.85 L946.32 362.25 L927.19 362.25 L925.79 359.85 L925.79 347.05 Z" fill="none" stroke="#8ccc8c" stroke-width="1.9" stroke-linejoin="round"/><text x="927.9" y="359.9">0</text><path d="M950.42 344.65 L992.77 344.65 L994.17 347.05 L994.17 359.85 L992.77 362.25 L950.42 362.25 L949.02 359.85 L949.02 347.05 Z" fill="none" stroke="#8ccc8c" stroke-width="1.9" stroke-linejoin="round"/><text x="951.2" y="359.9">5</text><path d="M996.87 344.65 L1016.00 344.65 L1017.39 347.05 L1017.39 359.85 L1016.00 362.25 L996.87 362.25 L995.47 359.85 L995.47 347.05 Z" fill="none" stroke="#8ccc8c" stroke-width="1.9" stroke-linejoin="round"/><text x="997.6" y="359.9">14</text><path d="M1020.09 344.65 L1062.44 344.65 L1063.85 347.05 L1063.85 359.85 L1062.44 362.25 L1020.09 362.25 L1018.69 359.85 L1018.69 347.05 Z" fill="none" stroke="#8ccc8c" stroke-width="1.9" stroke-linejoin="round"/><text x="1020.8" y="359.9">2039</text><path d="M1066.55 344.65 L1108.89 344.65 L1110.30 347.05 L1110.30 359.85 L1108.89 362.25 L1066.55 362.25 L1065.14 359.85 L1065.14 347.05 Z" fill="none" stroke="#8ccc8c" stroke-width="1.9" stroke-linejoin="round"/><text x="1067.3" y="359.9">120</text><path d="M1113.00 344.65 L1155.35 344.65 L1156.75 347.05 L1156.75 359.85 L1155.35 362.25 L1113.00 362.25 L1111.60 359.85 L1111.60 347.05 Z" fill="none" stroke="#8ccc8c" stroke-width="1.9" stroke-linejoin="round"/><text x="1113.7" y="359.9">20</text><path d="M1159.45 344.65 L1201.80 344.65 L1203.20 347.05 L1203.20 359.85 L1201.80 362.25 L1159.45 362.25 L1158.05 359.85 L1158.05 347.05 Z" fill="none" stroke="#8ccc8c" stroke-width="1.9" stroke-linejoin="round"/><text x="1160.2" y="359.9">120</text><path d="M1205.90 344.65 L1225.02 344.65 L1226.42 347.05 L1226.42 359.85 L1225.02 362.25 L1205.90 362.25 L1204.50 359.85 L1204.50 347.05 Z" fill="none" stroke="#8ccc8c" stroke-width="1.9" stroke-linejoin="round"/><text x="1206.6" y="359.9">0</text><path d="M1229.12 344.65 L1271.47 344.65 L1272.87 347.05 L1272.87 359.85 L1271.47 362.25 L1229.12 362.25 L1227.72 359.85 L1227.72 347.05 Z" fill="none" stroke="#8ccc8c" stroke-width="1.9" stroke-linejoin="round"/><text x="1229.9" y="359.9">6</text><path d="M1275.57 344.65 L1294.69 344.65 L1296.10 347.05 L1296.10 359.85 L1294.69 362.25 L1275.57 362.25 L1274.17 359.85 L1274.17 347.05 Z" fill="none" stroke="#8ccc8c" stroke-width="1.9" stroke-linejoin="round"/><text x="1276.3" y="359.9">3</text><path d="M1298.80 344.65 L1341.14 344.65 L1342.55 347.05 L1342.55 359.85 L1341.14 362.25 L1298.80 362.25 L1297.39 359.85 L1297.39 347.05 Z" fill="none" stroke="#8ccc8c" stroke-width="1.9" stroke-linejoin="round"/><text x="1299.5" y="359.9">2047</text><path d="M1345.25 344.65 L1387.60 344.65 L1389.00 347.05 L1389.00 359.85 L1387.60 362.25 L1345.25 362.25 L1343.85 359.85 L1343.85 347.05 Z" fill="none" stroke="#8ccc8c" stroke-width="1.9" stroke-linejoin="round"/><text x="1346.0" y="359.9">720</text><path d="M1391.70 344.65 L1434.05 344.65 L1435.45 347.05 L1435.45 359.85 L1434.05 362.25 L1391.70 362.25 L1390.30 359.85 L1390.30 347.05 Z" fill="none" stroke="#8ccc8c" stroke-width="1.9" stroke-linejoin="round"/><text x="1392.4" y="359.9">20</text><path d="M1438.15 344.65 L1480.49 344.65 L1481.89 347.05 L1481.89 359.85 L1480.49 362.25 L1438.15 362.25 L1436.75 359.85 L1436.75 347.05 Z" fill="none" stroke="#8ccc8c" stroke-width="1.9" stroke-linejoin="round"/><text x="1438.9" y="359.9">0</text><path d="M1484.60 344.65 L1526.94 344.65 L1528.35 347.05 L1528.35 359.85 L1526.94 362.25 L1484.60 362.25 L1483.19 359.85 L1483.19 347.05 Z" fill="none" stroke="#8ccc8c" stroke-width="1.9" stroke-linejoin="round"/><text x="1485.3" y="359.9">5</text><path d="M1531.05 344.65 L1573.39 344.65 L1574.80 347.05 L1574.80 359.85 L1573.39 362.25 L1531.05 362.25 L1529.64 359.85 L1529.64 347.05 Z" fill="none" stroke="#8ccc8c" stroke-width="1.9" stroke-linejoin="round"/><text x="1531.8" y="359.9">720</text><path d="M1577.50 344.65 L1862.85 344.65 L1864.25 347.05 L1864.25 359.85 L1862.85 362.25 L1577.50 362.25 L1576.10 359.85 L1576.10 347.05 Z" fill="none" stroke="#8ccc8c" stroke-width="1.9" stroke-linejoin="round"/><text x="1578.2" y="359.9">0</text><path d="M895.45 369.72 L923.10 369.72 L924.50 372.12 L924.50 384.93 L923.10 387.32 L895.45 387.32 L894.05 384.93 L894.05 372.12 Z" fill="none" stroke="#8ccc8c" stroke-width="1.9" stroke-linejoin="round"/><path d="M927.19 369.72 L1062.44 369.72 L1063.85 372.12 L1063.85 384.93 L1062.44 387.32 L927.19 387.32 L925.79 384.93 L925.79 372.12 Z" fill="none" stroke="#8ccc8c" stroke-width="1.9" stroke-linejoin="round"/><text x="927.9" y="384.9">2031</text><path d="M1066.55 369.72 L1108.89 369.72 L1110.30 372.12 L1110.30 384.93 L1108.89 387.32 L1066.55 387.32 L1065.14 384.93 L1065.14 372.12 Z" fill="none" stroke="#8ccc8c" stroke-width="1.9" stroke-linejoin="round"/><text x="1067.3" y="384.9">5</text><path d="M1113.00 369.72 L1155.35 369.72 L1156.75 372.12 L1156.75 384.93 L1155.35 387.32 L1113.00 387.32 L1111.60 384.93 L1111.60 372.12 Z" fill="none" stroke="#8ccc8c" stroke-width="1.9" stroke-linejoin="round"/><text x="1113.7" y="384.9">14</text><path d="M1159.45 369.72 L1201.80 369.72 L1203.20 372.12 L1203.20 384.93 L1201.80 387.32 L1159.45 387.32 L1158.05 384.93 L1158.05 372.12 Z" fill="none" stroke="#8ccc8c" stroke-width="1.9" stroke-linejoin="round"/><text x="1160.2" y="384.9">120</text><path d="M1205.90 369.72 L1341.14 369.72 L1342.55 372.12 L1342.55 384.93 L1341.14 387.32 L1205.90 387.32 L1204.50 384.93 L1204.50 372.12 Z" fill="none" stroke="#8ccc8c" stroke-width="1.9" stroke-linejoin="round"/><text x="1206.6" y="384.9">2039</text><path d="M1345.25 369.72 L1387.60 369.72 L1389.00 372.12 L1389.00 384.93 L1387.60 387.32 L1345.25 387.32 L1343.85 384.93 L1343.85 372.12 Z" fill="none" stroke="#8ccc8c" stroke-width="1.9" stroke-linejoin="round"/><text x="1346.0" y="384.9">6</text><path d="M1391.70 369.72 L1434.05 369.72 L1435.45 372.12 L1435.45 384.93 L1434.05 387.32 L1391.70 387.32 L1390.30 384.93 L1390.30 372.12 Z" fill="none" stroke="#8ccc8c" stroke-width="1.9" stroke-linejoin="round"/><text x="1392.4" y="384.9">3</text><path d="M1438.15 369.72 L1526.94 369.72 L1528.35 372.12 L1528.35 384.93 L1526.94 387.32 L1438.15 387.32 L1436.75 384.93 L1436.75 372.12 Z" fill="none" stroke="#8ccc8c" stroke-width="1.9" stroke-linejoin="round"/><text x="1438.9" y="384.9">0</text><path d="M1531.05 369.72 L1573.39 369.72 L1574.80 372.12 L1574.80 384.93 L1573.39 387.32 L1531.05 387.32 L1529.64 384.93 L1529.64 372.12 Z" fill="none" stroke="#8ccc8c" stroke-width="1.9" stroke-linejoin="round"/><text x="1531.8" y="384.9">720</text><path d="M1577.50 369.72 L1862.85 369.72 L1864.25 372.12 L1864.25 384.93 L1862.85 387.32 L1577.50 387.32 L1576.10 384.93 L1576.10 372.12 Z" fill="none" stroke="#8ccc8c" stroke-width="1.9" stroke-linejoin="round"/><text x="1578.2" y="384.9">0</text><path d="M895.45 394.80 L1062.44 394.80 L1063.85 397.20 L1063.85 410.00 L1062.44 412.40 L895.45 412.40 L894.05 410.00 L894.05 397.20 Z" fill="none" stroke="#8ccc8c" stroke-width="1.9" stroke-linejoin="round"/><text x="905.3" y="410.0">0</text><path d="M1066.55 394.80 L1108.89 394.80 L1110.30 397.20 L1110.30 410.00 L1108.89 412.40 L1066.55 412.40 L1065.14 410.00 L1065.14 397.20 Z" fill="none" stroke="#8ccc8c" stroke-width="1.9" stroke-linejoin="round"/><text x="1067.3" y="410.0">24</text><path d="M1113.00 394.80 L1341.14 394.80 L1342.55 397.20 L1342.55 410.00 L1341.14 412.40 L1113.00 412.40 L1111.60 410.00 L1111.60 397.20 Z" fill="none" stroke="#8ccc8c" stroke-width="1.9" stroke-linejoin="round"/><text x="1113.7" y="410.0">0</text><path d="M1345.25 394.80 L1387.60 394.80 L1389.00 397.20 L1389.00 410.00 L1387.60 412.40 L1345.25 412.40 L1343.85 410.00 L1343.85 397.20 Z" fill="none" stroke="#8ccc8c" stroke-width="1.9" stroke-linejoin="round"/><text x="1346.0" y="410.0">120</text><path d="M1391.70 394.80 L1434.05 394.80 L1435.45 397.20 L1435.45 410.00 L1434.05 412.40 L1391.70 412.40 L1390.30 410.00 L1390.30 397.20 Z" fill="none" stroke="#8ccc8c" stroke-width="1.9" stroke-linejoin="round"/><text x="1392.4" y="410.0">0</text><path d="M1438.15 394.80 L1480.49 394.80 L1481.89 397.20 L1481.89 410.00 L1480.49 412.40 L1438.15 412.40 L1436.75 410.00 L1436.75 397.20 Z" fill="none" stroke="#8ccc8c" stroke-width="1.9" stroke-linejoin="round"/><text x="1438.9" y="410.0">720</text><path d="M1484.60 394.80 L1862.85 394.80 L1864.25 397.20 L1864.25 410.00 L1862.85 412.40 L1484.60 412.40 L1483.19 410.00 L1483.19 397.20 Z" fill="none" stroke="#8ccc8c" stroke-width="1.9" stroke-linejoin="round"/><text x="1485.3" y="410.0">0</text><path d="M898.50 419.87 L1064.60 419.87 L1064.60 437.47 L1111.05 437.47 L1111.05 419.87 L1343.30 419.87 L1343.30 437.47 L1389.75 437.47 L1389.75 419.87 L1575.55 419.87 L1575.55 437.47 L1860.00 437.47" fill="none" stroke="#20c820" stroke-width="1.9" stroke-linejoin="round"/><path d="M898.50 462.55 L1436.20 462.55 L1436.20 444.95 L1482.64 444.95 L1482.64 462.55 L1860.00 462.55" fill="none" stroke="#20c820" stroke-width="1.9" stroke-linejoin="round"/><path d="M898.50 487.62 L925.25 487.62 L925.25 470.02 L1018.14 470.02 L1018.14 487.62 L1203.95 487.62 L1203.95 470.02 L1296.85 470.02 L1296.85 487.62 L1860.00 487.62" fill="none" stroke="#20c820" stroke-width="1.9" stroke-linejoin="round"/><path d="M898.50 512.70 L1482.64 512.70 L1482.64 495.10 L1529.10 495.10 L1529.10 512.70 L1860.00 512.70" fill="none" stroke="#20c820" stroke-width="1.9" stroke-linejoin="round"/><path d="M898.50 520.17 L1436.20 520.17 L1436.20 537.77 L1482.64 537.77 L1482.64 520.17 L1575.55 520.17 L1575.55 537.77 L1860.00 537.77" fill="none" stroke="#20c820" stroke-width="1.9" stroke-linejoin="round"/><path d="M898.50 562.85 L1860.00 562.85" fill="none" stroke="#20c820" stroke-width="1.9" stroke-linejoin="round"/><path d="M898.50 587.92 L1111.05 587.92 L1111.05 570.32 L1157.50 570.32 L1157.50 587.92 L1389.75 587.92 L1389.75 570.32 L1436.20 570.32 L1436.20 587.92 L1482.64 587.92 L1482.64 570.32 L1529.10 570.32 L1529.10 587.92 L1860.00 587.92" fill="none" stroke="#20c820" stroke-width="1.9" stroke-linejoin="round"/><path d="M898.50 613.00 L1111.05 613.00 L1111.05 595.40 L1157.50 595.40 L1157.50 613.00 L1389.75 613.00 L1389.75 595.40 L1436.20 595.40 L1436.20 613.00 L1860.00 613.00" fill="none" stroke="#20c820" stroke-width="1.9" stroke-linejoin="round"/></g><rect x="919.70" y="634.5" width="1.8" height="10" fill="#20c820"/><rect x="943.03" y="637.5" width="1.6" height="6" fill="#20c820"/><rect x="966.25" y="637.5" width="1.6" height="6" fill="#20c820"/><rect x="989.48" y="637.5" width="1.6" height="6" fill="#20c820"/><rect x="1012.70" y="637.5" width="1.6" height="6" fill="#20c820"/><rect x="1035.82" y="634.5" width="1.8" height="10" fill="#20c820"/><rect x="1059.15" y="637.5" width="1.6" height="6" fill="#20c820"/><rect x="1082.38" y="637.5" width="1.6" height="6" fill="#20c820"/><rect x="1105.60" y="637.5" width="1.6" height="6" fill="#20c820"/><rect x="1128.83" y="637.5" width="1.6" height="6" fill="#20c820"/><rect x="1151.95" y="634.5" width="1.8" height="10" fill="#20c820"/><rect x="1175.28" y="637.5" width="1.6" height="6" fill="#20c820"/><rect x="1198.50" y="637.5" width="1.6" height="6" fill="#20c820"/><rect x="1221.73" y="637.5" width="1.6" height="6" fill="#20c820"/><rect x="1244.95" y="637.5" width="1.6" height="6" fill="#20c820"/><rect x="1268.07" y="634.5" width="1.8" height="10" fill="#20c820"/><rect x="1291.40" y="637.5" width="1.6" height="6" fill="#20c820"/><rect x="1314.63" y="637.5" width="1.6" height="6" fill="#20c820"/><rect x="1337.85" y="637.5" width="1.6" height="6" fill="#20c820"/><rect x="1361.08" y="637.5" width="1.6" height="6" fill="#20c820"/><rect x="1384.20" y="634.5" width="1.8" height="10" fill="#20c820"/><rect x="1407.53" y="637.5" width="1.6" height="6" fill="#20c820"/><rect x="1430.75" y="637.5" width="1.6" height="6" fill="#20c820"/><rect x="1453.98" y="637.5" width="1.6" height="6" fill="#20c820"/><rect x="1477.20" y="637.5" width="1.6" height="6" fill="#20c820"/><rect x="1500.32" y="634.5" width="1.8" height="10" fill="#20c820"/><rect x="1523.65" y="637.5" width="1.6" height="6" fill="#20c820"/><rect x="1546.88" y="637.5" width="1.6" height="6" fill="#20c820"/><rect x="1570.10" y="637.5" width="1.6" height="6" fill="#20c820"/><rect x="1593.33" y="637.5" width="1.6" height="6" fill="#20c820"/><rect x="1616.45" y="634.5" width="1.8" height="10" fill="#20c820"/><rect x="1639.78" y="637.5" width="1.6" height="6" fill="#20c820"/><rect x="1663.00" y="637.5" width="1.6" height="6" fill="#20c820"/><rect x="1686.23" y="637.5" width="1.6" height="6" fill="#20c820"/><rect x="1709.45" y="637.5" width="1.6" height="6" fill="#20c820"/><rect x="1732.57" y="634.5" width="1.8" height="10" fill="#20c820"/><rect x="1755.90" y="637.5" width="1.6" height="6" fill="#20c820"/><rect x="1779.13" y="637.5" width="1.6" height="6" fill="#20c820"/><rect x="1802.35" y="637.5" width="1.6" height="6" fill="#20c820"/><rect x="1825.58" y="637.5" width="1.6" height="6" fill="#20c820"/><rect x="1848.70" y="634.5" width="1.8" height="10" fill="#20c820"/><text x="920.1" y="662.8" font-size="15.6" text-anchor="middle" fill="#20c820" clip-path="url(#ac)">6000 ns</text><text x="1152.3" y="662.8" font-size="15.6" text-anchor="middle" fill="#20c820" clip-path="url(#ac)">6500 ns</text><text x="1384.6" y="662.8" font-size="15.6" text-anchor="middle" fill="#20c820" clip-path="url(#ac)">7000 ns</text><text x="1616.8" y="662.8" font-size="15.6" text-anchor="middle" fill="#20c820" clip-path="url(#ac)">7500 ns</text><text x="1849.1" y="662.8" font-size="15.6" text-anchor="middle" fill="#20c820" clip-path="url(#ac)">8000 ns</text><rect x="1615.54" y="52" width="4.4" height="25.5" fill="#ffcf30"/><rect x="1615.54" y="81" width="4.4" height="547.7" fill="#ffcf30"/><rect x="1615.54" y="634" width="4.4" height="32" fill="#ffcf30"/><rect x="1617.24" y="636" width="1" height="14" fill="#ff7030"/><rect x="1570.5" y="668.5" width="95" height="22" fill="#000" stroke="#e8b428" stroke-width="1.6"/><text x="1618" y="685.3" text-anchor="middle" fill="#e8c040">7502.129 ns</text><polygon points="1684.2,213.3 1692.8,218.3 1664.5,273 1655.5,266.5" fill="#fff"/><polygon points="1639.2,254.5 1683.2,277.6 1637.9,310.1" fill="#fff"/></svg>
</div>
</body></html>
